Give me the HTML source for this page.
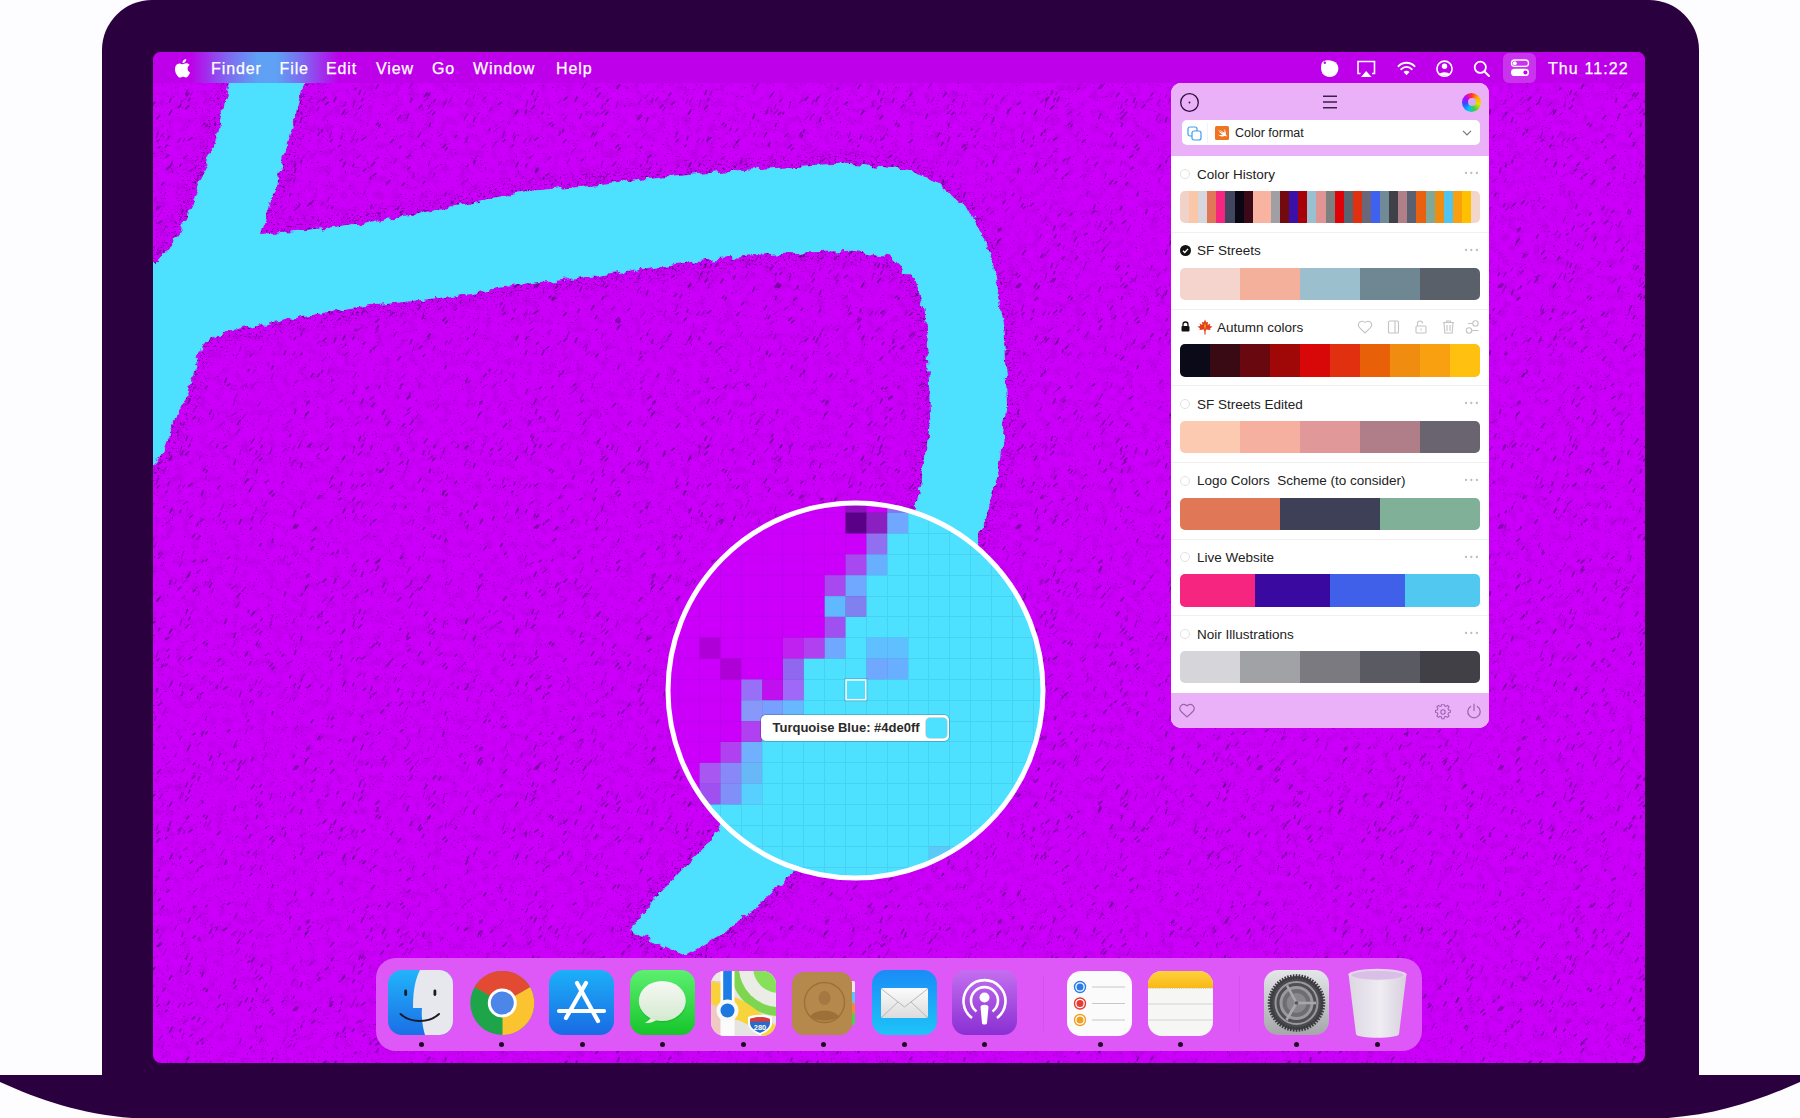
<!DOCTYPE html>
<html><head><meta charset="utf-8">
<style>
*{box-sizing:border-box;margin:0;padding:0}
html,body{width:1800px;height:1118px;overflow:hidden;background:#fdfcfe;font-family:"Liberation Sans",sans-serif}
.abs{position:absolute}
#frame{position:absolute;left:102px;top:0;width:1597px;height:1090px;background:#2a003f;border-radius:50px 50px 0 0}
#base{position:absolute;left:0;top:0}
#screen{position:absolute;left:153px;top:52px;width:1492px;height:1011px;background:#cc00fa;border-radius:8px;overflow:hidden}
#stroke{position:absolute;left:0;top:0}
#menubar{position:absolute;left:0;top:0;width:1492px;height:30.5px;background:#bd00e9}
.mbglow{position:absolute;left:38px;top:0;width:148px;height:30.5px;background:linear-gradient(90deg,rgba(85,175,245,0) 0%,rgba(85,175,245,0.6) 25%,rgba(85,178,245,0.9) 45%,rgba(85,178,245,0.9) 58%,rgba(85,175,245,0.6) 75%,rgba(85,175,245,0) 100%)}
.mi{position:absolute;top:7.8px;color:#fff;font-size:16px;line-height:18px;letter-spacing:0.9px;-webkit-text-stroke:0.25px #fff}
#panel{position:absolute;left:1171px;top:83px;width:318px;height:645px;background:#fff;border-radius:10px;overflow:hidden}
.phead{position:absolute;left:0;top:0;width:318px;height:72.6px;background:#ebb1f8}
.pfoot{position:absolute;left:0;top:610px;width:318px;height:35px;background:#ebb1f8}
.dd{position:absolute;left:11px;top:36.7px;width:298px;height:25.8px;background:#fff;border-radius:5px}
.lbl{position:absolute;font-size:13.5px;line-height:18px;color:#222;white-space:nowrap}
.sw{position:absolute;left:9px;width:300px;height:32.3px;border-radius:5px;overflow:hidden;display:flex}
.sep{position:absolute;left:0;width:318px;height:1px;background:#f0f0f0}
.tip{position:absolute;left:761px;top:715px;width:188px;height:26px;background:#fff;border-radius:5px;box-shadow:0 0 0 0.8px rgba(0,0,0,0.22)}
.tip span{position:absolute;left:11.5px;top:5px;font-size:13px;line-height:16px;font-weight:bold;color:#2a2a2a;white-space:nowrap}
.tsw{position:absolute;left:165px;top:3px;width:20.5px;height:20px;border-radius:4px;background:#4de0ff;box-shadow:0 0 0 0.7px rgba(0,0,0,0.2)}
#dock{position:absolute;left:376px;top:958px;width:1046px;height:93px;border-radius:20px;background:#dd58f6}
.dsep{position:absolute;top:975px;width:1px;height:56px;background:rgba(150,40,170,0.13)}
.ddot{position:absolute;top:1042px;width:5px;height:5px;border-radius:50%;background:#1e0a28}
</style></head><body>
<svg id="base" width="1800" height="1118" viewBox="0 0 1800 1118">
<path d="M0 1075 L1800 1075 L1800 1082 C1760 1100 1720 1114 1668 1118 L132 1118 C80 1114 40 1100 0 1082 Z" fill="#2a003f"/>
</svg>
<div id="frame"></div>
<div id="screen">
<svg id="stroke" width="1492" height="1011" viewBox="153 52 1492 1011">
<defs>
<filter id="spk" x="0" y="0" width="100%" height="100%" color-interpolation-filters="sRGB"><feTurbulence type="fractalNoise" baseFrequency="0.45 0.55" numOctaves="3" seed="7" result="n"/><feColorMatrix in="n" type="matrix" values="0 0 0 0 0.2  0 0 0 0 0  0 0 0 0 0.3  0 0 0 -14 4.2" result="s"/><feComponentTransfer in="s"><feFuncA type="linear" slope="0.6"/></feComponentTransfer></filter><filter id="mot" x="0" y="0" width="100%" height="100%" color-interpolation-filters="sRGB"><feTurbulence type="fractalNoise" baseFrequency="0.12" numOctaves="2" seed="13" result="n"/><feColorMatrix in="n" type="matrix" values="0 0 0 0 0.45  0 0 0 0 0  0 0 0 0 0.6  0 0 0 -2.2 1.2"/></filter>
<filter id="rough" x="-5%" y="-5%" width="110%" height="110%"><feTurbulence type="fractalNoise" baseFrequency="0.1" numOctaves="4" seed="3" result="t"/><feDisplacementMap in="SourceGraphic" in2="t" scale="9" xChannelSelector="R" yChannelSelector="G"/></filter>
<filter id="edgetex" x="-5%" y="-5%" width="110%" height="110%" color-interpolation-filters="sRGB"><feTurbulence type="fractalNoise" baseFrequency="0.35 0.5" numOctaves="3" seed="19" result="n"/><feColorMatrix in="n" type="matrix" values="0 0 0 0 0  0 0 0 0 0  0 0 0 0 0  0 0 0 -14 5.3" result="m"/><feGaussianBlur in="SourceGraphic" stdDeviation="6" result="b"/><feComposite in="b" in2="m" operator="in"/></filter><pattern id="st1" width="173" height="173" patternUnits="userSpaceOnUse" patternTransform="translate(0 0)"><path d="M78.3 96.8l2.8 -3.8M87.9 101.6l1.4 -2.1M109.0 137.2l1.6 -1.7M15.7 140.1l3.3 -2.4M169.9 166.9l2.0 -3.4M27.2 2.6l2.8 -2.2M32.9 41.9l1.2 -1.7M76.2 145.7l1.7 -3.1M86.5 114.6l2.3 -2.4M172.6 172.3l2.0 -4.0M54.5 39.7l2.3 -1.8M132.6 69.3l2.9 -3.5M165.7 146.6l1.5 -1.4M157.5 81.3l3.1 -3.8M12.6 108.9l3.0 -3.1M15.1 57.5l2.0 -4.4M20.4 42.6l1.8 -1.4M137.9 30.7l2.2 -2.9M33.0 126.6l1.2 -2.1M20.2 72.8l1.8 -1.9M168.0 139.0l1.0 -2.7M36.5 68.2l2.2 -4.0M17.4 171.1l1.9 -1.9M133.7 56.9l2.3 -1.8M15.6 100.8l1.4 -2.3M64.3 78.4l2.8 -4.0M99.4 149.9l1.9 -1.7M157.2 141.5l2.0 -1.9M127.9 162.7l0.8 -2.5M152.6 104.4l2.5 -2.1M6.7 166.5l1.2 -2.4M44.5 142.5l2.6 -2.8M30.3 124.6l1.6 -1.5M96.8 147.5l2.7 -2.8M158.7 35.3l1.4 -1.5M77.1 10.5l1.6 -1.9M99.0 22.8l1.0 -2.9M169.6 113.6l2.1 -3.5M24.3 6.1l0.7 -1.9M121.3 166.6l1.0 -1.8M83.4 126.4l0.8 -2.9M13.0 94.5l1.4 -4.0M127.5 121.7l1.4 -4.2M60.9 118.5l1.6 -4.4M72.2 136.8l2.4 -3.9" stroke="#40006a" stroke-opacity="0.55" stroke-width="1.6" stroke-linecap="round" fill="none"/><path d="M82.1 113.7l4.3 -3.7M1.9 64.8l1.6 -3.8M119.5 104.1l2.5 -4.6M25.1 76.1l1.2 -3.5M10.2 141.7l1.5 -2.9M58.3 70.0l5.2 -3.7M10.5 158.3l3.9 -3.1M170.8 163.8l2.1 -2.7M23.4 54.1l4.1 -3.6M120.6 8.9l1.4 -3.4M69.3 72.5l3.2 -4.4M66.5 5.3l1.7 -5.7M168.9 114.8l2.9 -3.4M119.4 116.6l2.5 -2.4M62.9 88.5l3.6 -5.1M4.9 142.3l2.7 -3.9M38.4 73.9l1.9 -4.2M17.8 95.1l1.7 -3.3M6.4 47.8l2.2 -3.8M9.0 79.5l2.7 -2.8M82.4 165.9l1.4 -4.7M29.0 159.9l3.3 -3.0M129.5 157.8l2.1 -2.2M133.3 59.1l3.2 -2.3M6.9 107.1l1.8 -6.7M87.1 4.1l1.7 -3.9M143.9 110.6l2.2 -3.3M82.6 108.5l1.2 -3.9M154.7 28.1l1.4 -3.9M48.1 163.3l2.3 -4.5M121.9 37.0l2.9 -2.9M118.2 120.1l1.2 -3.3M72.7 41.7l1.3 -4.6M96.9 108.1l1.9 -6.4M131.6 72.3l1.7 -5.1M136.5 100.4l2.8 -3.3M127.3 97.5l1.4 -2.7M156.4 138.0l2.1 -6.2M92.5 136.5l3.5 -2.8M61.1 54.0l3.1 -6.0" stroke="#40006a" stroke-opacity="0.4" stroke-width="1.2" stroke-linecap="round" fill="none"/></pattern><pattern id="st2" width="241" height="241" patternUnits="userSpaceOnUse" patternTransform="translate(37 91)"><path d="M39.8 166.2l2.0 -2.8M52.1 191.0l2.2 -3.2M121.7 56.9l1.0 -1.2M141.1 16.7l2.8 -2.7M56.1 10.2l1.9 -4.1M210.9 148.4l1.1 -1.2M119.9 27.9l2.8 -3.3M37.3 197.0l0.6 -1.8M109.2 133.0l1.5 -2.1M45.0 9.0l2.9 -2.9M188.0 50.3l1.5 -4.2M181.9 183.8l1.4 -2.9M29.5 114.8l2.9 -2.7M222.5 213.9l1.8 -2.1M108.8 93.0l2.9 -3.5M6.5 22.5l1.0 -3.5M119.5 118.5l1.3 -2.9M53.5 146.7l1.6 -2.7M43.5 41.0l0.8 -2.4M83.5 143.9l1.9 -1.5M15.8 196.1l2.5 -2.9M164.7 162.9l1.2 -4.0M98.1 238.4l2.3 -3.7M212.8 118.3l1.9 -1.9M211.2 39.1l0.7 -1.6M186.5 116.4l3.2 -2.4M62.2 69.9l2.1 -1.8M16.7 81.5l1.1 -4.0M179.7 115.4l0.6 -2.2M126.7 175.6l1.1 -1.1M202.0 191.6l2.1 -3.6M102.7 140.1l2.7 -3.0M128.8 66.5l3.1 -2.2M165.2 229.9l0.8 -1.3M155.2 205.3l2.3 -2.3M97.8 231.0l3.2 -2.7M22.9 22.6l1.0 -1.3M33.9 209.0l2.7 -2.2M129.8 78.2l2.2 -2.1M40.0 44.3l1.2 -2.4M132.6 11.1l1.2 -3.4M186.6 190.6l0.9 -1.2M15.3 184.1l0.9 -1.8M61.0 167.9l2.0 -1.5M93.7 74.6l2.9 -3.1M121.3 132.4l3.4 -2.7M144.9 122.5l1.0 -3.6M74.7 168.6l1.7 -2.6M15.4 196.3l2.9 -3.4M76.7 239.4l1.4 -1.1M17.7 196.3l2.3 -3.0M149.8 4.8l2.1 -2.7M124.7 93.8l1.9 -1.9M11.8 104.6l1.0 -2.0M197.0 174.4l2.0 -2.0M92.9 117.3l1.0 -3.3M20.6 115.6l1.3 -2.7M214.6 187.9l1.4 -3.1M161.0 207.0l1.7 -3.2M59.1 220.9l1.3 -2.3" stroke="#40006a" stroke-opacity="0.5" stroke-width="1.8" stroke-linecap="round" fill="none"/><path d="M230.9 33.8l0.8 -3.0M44.4 29.1l3.7 -4.2M214.4 55.8l4.6 -5.1M144.9 224.6l1.8 -5.5M170.7 11.7l3.4 -5.6M74.9 45.8l3.4 -5.4M226.1 186.5l3.7 -5.8M168.3 147.6l1.2 -3.9M75.3 188.2l3.3 -6.0M34.3 198.9l4.2 -3.8M11.8 128.2l1.0 -3.0M122.0 124.7l2.2 -4.1M220.9 74.1l2.4 -3.8M71.7 143.5l3.2 -4.1M162.3 127.3l0.9 -3.2M85.7 104.1l1.4 -4.4M229.5 123.4l3.6 -2.9M215.8 41.3l3.4 -3.9M79.1 86.1l3.0 -2.2M129.0 191.8l4.1 -3.8M167.2 12.6l1.7 -4.3M222.0 111.0l3.7 -5.2M126.3 140.9l3.0 -6.3M114.0 175.3l3.6 -4.2M189.0 197.6l1.6 -5.2M4.4 120.5l3.7 -4.2M41.3 166.8l3.3 -3.4M10.1 233.1l3.4 -2.8M52.1 61.4l4.8 -4.3M66.6 23.5l3.6 -3.3M82.9 177.1l2.5 -6.2M9.2 91.0l5.2 -3.8M49.0 118.1l1.9 -4.1M173.1 111.9l2.9 -2.8M64.2 15.7l4.3 -3.7M214.3 155.7l1.9 -2.6M145.5 10.2l4.0 -2.9M184.7 1.0l1.5 -5.3M204.0 56.2l3.9 -3.3M82.5 208.2l5.1 -3.6M91.6 154.3l1.4 -3.4M215.2 132.9l1.6 -4.2M123.6 45.4l3.1 -2.7M202.1 122.9l2.2 -5.4M234.7 45.9l1.6 -4.3M183.6 93.2l4.1 -3.8M39.0 12.2l3.2 -3.2M124.8 233.7l2.0 -3.0M208.4 144.2l2.1 -4.7M5.3 228.6l2.2 -5.3M198.9 23.8l2.4 -2.2M121.7 226.1l4.1 -5.2M150.0 178.3l1.2 -4.2M227.0 175.2l2.6 -6.1M157.2 77.4l2.9 -2.9M13.8 223.1l3.4 -2.5M76.2 24.9l3.2 -3.6M42.3 114.9l3.0 -3.5M196.0 73.9l1.8 -4.9M231.1 90.3l0.9 -3.0" stroke="#40006a" stroke-opacity="0.35" stroke-width="1.1" stroke-linecap="round" fill="none"/></pattern><filter id="soft" x="0" y="0" width="100%" height="100%"><feGaussianBlur stdDeviation="0.55"/></filter></defs>
<rect x="153" y="52" width="1492" height="1011" fill="#000" filter="url(#mot)" opacity="0.22"/><rect x="153" y="52" width="1492" height="1011" fill="#000" filter="url(#spk)" opacity="0.5"/><g filter="url(#soft)"><rect x="153" y="52" width="1492" height="1011" fill="url(#st1)"/><rect x="153" y="52" width="1492" height="1011" fill="url(#st2)"/></g>
<path fill="none" stroke="#2a0040" stroke-width="22" stroke-opacity="0.55" filter="url(#edgetex)" d="M235 52 L311 52 L303 83 L293 125 L278 178 L261 234 L326 228 L375 221 L440 209.5 L515 192.6 L628 181 L740 170 L853 164 L910 170 L940 185 L973 215 L992 260 L1003.5 328 L1007 403 L1000 459 L992 497 L981 531 L955 600 L870 780 L791.8 873 L764.6 900.2 L728.8 928.8 L684.5 956 L630 930.2 L657.3 895.9 L685.9 865.8 L711.6 841.5 L718.8 830 L800 700 L900 560 L917 500.6 L924.6 459.3 L930.2 421.7 L928.4 365.4 L924.6 309 L913.3 279 L890.8 256.5 L853.2 250.8 L796.9 252.7 L703 260.2 L609 273.4 L515 286.5 L440 297.8 L375.3 305.3 L300.2 316.6 L225 331.6 L202.6 342.9 L187.5 391.7 L172.5 425.5 L155.6 466.8 L140 480 L140 250 L155.6 262 L172.5 245.2 L187.5 215.2 L206.3 162.6 L217.6 136.3 L228.9 83 Z"/>
<path filter="url(#rough)" fill="#4de0ff" d="M235 52 L311 52 L303 83 L293 125 L278 178 L261 234 L326 228 L375 221 L440 209.5 L515 192.6 L628 181 L740 170 L853 164 L910 170 L940 185 L973 215 L992 260 L1003.5 328 L1007 403 L1000 459 L992 497 L981 531 L955 600 L870 780 L791.8 873 L764.6 900.2 L728.8 928.8 L684.5 956 L630 930.2 L657.3 895.9 L685.9 865.8 L711.6 841.5 L718.8 830 L800 700 L900 560 L917 500.6 L924.6 459.3 L930.2 421.7 L928.4 365.4 L924.6 309 L913.3 279 L890.8 256.5 L853.2 250.8 L796.9 252.7 L703 260.2 L609 273.4 L515 286.5 L440 297.8 L375.3 305.3 L300.2 316.6 L225 331.6 L202.6 342.9 L187.5 391.7 L172.5 425.5 L155.6 466.8 L140 480 L140 250 L155.6 262 L172.5 245.2 L187.5 215.2 L206.3 162.6 L217.6 136.3 L228.9 83 Z"/>
</svg>
<div id="menubar">
<div class="mbglow"></div>
<svg class="abs" style="left:21px;top:6px" width="17" height="20" viewBox="0 0 17 20"><path fill="#fff" d="M13.6 10.6c0-2.3 1.9-3.4 2-3.5-1.1-1.6-2.8-1.8-3.4-1.8-1.4-.1-2.8.9-3.5.9-.7 0-1.8-.8-3-.8C4.1 5.4 2.6 6.3 1.8 7.7c-1.7 2.9-.4 7.2 1.2 9.5.8 1.1 1.7 2.4 2.9 2.4 1.2 0 1.6-.8 3-.8s1.8.8 3 .7c1.3 0 2.1-1.2 2.8-2.3.9-1.3 1.3-2.6 1.3-2.7 0 0-2.4-.9-2.4-3.9zM11.3 3.8c.6-.8 1.1-1.8.9-2.9-.9 0-2 .6-2.7 1.4-.6.7-1.1 1.8-1 2.8 1.1.1 2.1-.5 2.8-1.3z"/></svg>
<div class="mi" style="left:58px">Finder</div>
<div class="mi" style="left:126.5px">File</div>
<div class="mi" style="left:173px">Edit</div>
<div class="mi" style="left:223px">View</div>
<div class="mi" style="left:279px">Go</div>
<div class="mi" style="left:320px">Window</div>
<div class="mi" style="left:403px">Help</div>
<div class="mi" style="left:1395px;letter-spacing:1.1px">Thu 11:22</div>
<div class="abs" style="left:1350px;top:1px;width:33px;height:30px;border-radius:6px;background:rgba(255,255,255,0.2)"></div>
<svg class="abs" style="left:1160px;top:0" width="230" height="31" viewBox="1313 52 230 31">
 <path fill="#fff" d="M1323 61.5 C1327 59.5 1334 60 1337 64 C1339.5 67.5 1338.5 73.5 1334 76 C1330 78 1325 77 1322.5 73.5 C1320.5 70 1320.5 63.5 1323 61.5Z"/>
 <circle cx="1324.8" cy="62.8" r="1.2" fill="#c000ee"/>
 <path fill="none" stroke="#fff" stroke-width="1.6" d="M1360.5 73.5 H1358 V61.5 H1374.5 V73.5 H1372"/>
 <path fill="#fff" d="M1366.2 71 L1371.5 77 H1361 Z"/>
 <path fill="none" stroke="#fff" stroke-width="1.9" stroke-linecap="round" d="M1398.5 66.2 A11 11 0 0 1 1414.5 66.2 M1401.3 69.2 A7 7 0 0 1 1411.7 69.2"/>
 <path fill="#fff" d="M1403.5 72 A4 4 0 0 1 1409.5 72 L1406.5 75.2 Z"/>
 <circle cx="1444.5" cy="68.7" r="7.6" fill="none" stroke="#fff" stroke-width="1.6"/>
 <circle cx="1444.5" cy="66.3" r="2.7" fill="#fff"/>
 <path fill="#fff" d="M1439.2 74.3 C1440.5 71.6 1448.5 71.6 1449.8 74.3 C1448 76 1441 76 1439.2 74.3Z"/>
 <circle cx="1480.3" cy="67.3" r="5.6" fill="none" stroke="#fff" stroke-width="1.8"/>
 <path stroke="#fff" stroke-width="2" stroke-linecap="round" d="M1484.5 71.5 L1489 76"/>
 <rect x="1511.5" y="60" width="17" height="6.3" rx="3.15" fill="none" stroke="#fff" stroke-width="1.3"/>
 <circle cx="1514.8" cy="63.15" r="2" fill="#fff"/>
 <rect x="1511" y="68.8" width="18" height="7.2" rx="3.6" fill="#fff"/>
 <circle cx="1525.4" cy="72.4" r="2" fill="#c000ee"/>
</svg>
</div>
</div>
<svg id="mag" class="abs" style="left:0;top:0" width="1800" height="1118" viewBox="0 0 1800 1118">
<defs><clipPath id="mc"><circle cx="855.5" cy="690.5" r="186"/></clipPath></defs>
<g clip-path="url(#mc)">
<rect x="640" y="480" width="430" height="420" fill="#4de0ff"/>
<rect x="637.00" y="470.90" width="21.5" height="21.5" fill="#cc00fa"/><rect x="657.85" y="470.90" width="21.5" height="21.5" fill="#cc00fa"/><rect x="678.70" y="470.90" width="21.5" height="21.5" fill="#cc00fa"/><rect x="699.55" y="470.90" width="21.5" height="21.5" fill="#cc00fa"/><rect x="720.40" y="470.90" width="21.5" height="21.5" fill="#cc00fa"/><rect x="741.25" y="470.90" width="21.5" height="21.5" fill="#cc00fa"/><rect x="762.10" y="470.90" width="21.5" height="21.5" fill="#cc00fa"/><rect x="782.95" y="470.90" width="21.5" height="21.5" fill="#cc00fa"/><rect x="803.80" y="470.90" width="21.5" height="21.5" fill="#cc00fa"/><rect x="824.65" y="470.90" width="21.5" height="21.5" fill="#cc00fa"/><rect x="845.50" y="470.90" width="21.5" height="21.5" fill="#cc00fa"/><rect x="866.35" y="470.90" width="21.5" height="21.5" fill="#cc00fa"/><rect x="887.20" y="470.90" width="21.5" height="21.5" fill="#cc00fa"/><rect x="908.05" y="470.90" width="21.5" height="21.5" fill="#4de0ff"/><rect x="928.90" y="470.90" width="21.5" height="21.5" fill="#4de0ff"/><rect x="949.75" y="470.90" width="21.5" height="21.5" fill="#4de0ff"/><rect x="970.60" y="470.90" width="21.5" height="21.5" fill="#4de0ff"/><rect x="991.45" y="470.90" width="21.5" height="21.5" fill="#4de0ff"/><rect x="1012.30" y="470.90" width="21.5" height="21.5" fill="#4de0ff"/><rect x="1033.15" y="470.90" width="21.5" height="21.5" fill="#4de0ff"/><rect x="1054.00" y="470.90" width="21.5" height="21.5" fill="#4de0ff"/><rect x="637.00" y="491.75" width="21.5" height="21.5" fill="#cc00fa"/><rect x="657.85" y="491.75" width="21.5" height="21.5" fill="#cc00fa"/><rect x="678.70" y="491.75" width="21.5" height="21.5" fill="#cc00fa"/><rect x="699.55" y="491.75" width="21.5" height="21.5" fill="#cc00fa"/><rect x="720.40" y="491.75" width="21.5" height="21.5" fill="#cc00fa"/><rect x="741.25" y="491.75" width="21.5" height="21.5" fill="#cc00fa"/><rect x="762.10" y="491.75" width="21.5" height="21.5" fill="#cc00fa"/><rect x="782.95" y="491.75" width="21.5" height="21.5" fill="#cc00fa"/><rect x="803.80" y="491.75" width="21.5" height="21.5" fill="#cc00fa"/><rect x="824.65" y="491.75" width="21.5" height="21.5" fill="#cc00fa"/><rect x="845.50" y="491.75" width="21.5" height="21.5" fill="#9010c0"/><rect x="866.35" y="491.75" width="21.5" height="21.5" fill="#cc00fa"/><rect x="887.20" y="491.75" width="21.5" height="21.5" fill="#9070f0"/><rect x="908.05" y="491.75" width="21.5" height="21.5" fill="#4de0ff"/><rect x="928.90" y="491.75" width="21.5" height="21.5" fill="#4de0ff"/><rect x="949.75" y="491.75" width="21.5" height="21.5" fill="#4de0ff"/><rect x="970.60" y="491.75" width="21.5" height="21.5" fill="#4de0ff"/><rect x="991.45" y="491.75" width="21.5" height="21.5" fill="#4de0ff"/><rect x="1012.30" y="491.75" width="21.5" height="21.5" fill="#4de0ff"/><rect x="1033.15" y="491.75" width="21.5" height="21.5" fill="#4de0ff"/><rect x="1054.00" y="491.75" width="21.5" height="21.5" fill="#4de0ff"/><rect x="637.00" y="512.60" width="21.5" height="21.5" fill="#cc00fa"/><rect x="657.85" y="512.60" width="21.5" height="21.5" fill="#cc00fa"/><rect x="678.70" y="512.60" width="21.5" height="21.5" fill="#cc00fa"/><rect x="699.55" y="512.60" width="21.5" height="21.5" fill="#cc00fa"/><rect x="720.40" y="512.60" width="21.5" height="21.5" fill="#cc00fa"/><rect x="741.25" y="512.60" width="21.5" height="21.5" fill="#cc00fa"/><rect x="762.10" y="512.60" width="21.5" height="21.5" fill="#cc00fa"/><rect x="782.95" y="512.60" width="21.5" height="21.5" fill="#cc00fa"/><rect x="803.80" y="512.60" width="21.5" height="21.5" fill="#cc00fa"/><rect x="824.65" y="512.60" width="21.5" height="21.5" fill="#cc00fa"/><rect x="845.50" y="512.60" width="21.5" height="21.5" fill="#5a0088"/><rect x="866.35" y="512.60" width="21.5" height="21.5" fill="#8a20c0"/><rect x="887.20" y="512.60" width="21.5" height="21.5" fill="#70a8ff"/><rect x="908.05" y="512.60" width="21.5" height="21.5" fill="#4de0ff"/><rect x="928.90" y="512.60" width="21.5" height="21.5" fill="#4de0ff"/><rect x="949.75" y="512.60" width="21.5" height="21.5" fill="#4de0ff"/><rect x="970.60" y="512.60" width="21.5" height="21.5" fill="#4de0ff"/><rect x="991.45" y="512.60" width="21.5" height="21.5" fill="#4de0ff"/><rect x="1012.30" y="512.60" width="21.5" height="21.5" fill="#4de0ff"/><rect x="1033.15" y="512.60" width="21.5" height="21.5" fill="#4de0ff"/><rect x="1054.00" y="512.60" width="21.5" height="21.5" fill="#4de0ff"/><rect x="637.00" y="533.45" width="21.5" height="21.5" fill="#cc00fa"/><rect x="657.85" y="533.45" width="21.5" height="21.5" fill="#cc00fa"/><rect x="678.70" y="533.45" width="21.5" height="21.5" fill="#cc00fa"/><rect x="699.55" y="533.45" width="21.5" height="21.5" fill="#cc00fa"/><rect x="720.40" y="533.45" width="21.5" height="21.5" fill="#cc00fa"/><rect x="741.25" y="533.45" width="21.5" height="21.5" fill="#cc00fa"/><rect x="762.10" y="533.45" width="21.5" height="21.5" fill="#cc00fa"/><rect x="782.95" y="533.45" width="21.5" height="21.5" fill="#cc00fa"/><rect x="803.80" y="533.45" width="21.5" height="21.5" fill="#cc00fa"/><rect x="824.65" y="533.45" width="21.5" height="21.5" fill="#cc00fa"/><rect x="845.50" y="533.45" width="21.5" height="21.5" fill="#cc00fa"/><rect x="866.35" y="533.45" width="21.5" height="21.5" fill="#9070f0"/><rect x="887.20" y="533.45" width="21.5" height="21.5" fill="#4de0ff"/><rect x="908.05" y="533.45" width="21.5" height="21.5" fill="#4de0ff"/><rect x="928.90" y="533.45" width="21.5" height="21.5" fill="#4de0ff"/><rect x="949.75" y="533.45" width="21.5" height="21.5" fill="#4de0ff"/><rect x="970.60" y="533.45" width="21.5" height="21.5" fill="#4de0ff"/><rect x="991.45" y="533.45" width="21.5" height="21.5" fill="#4de0ff"/><rect x="1012.30" y="533.45" width="21.5" height="21.5" fill="#4de0ff"/><rect x="1033.15" y="533.45" width="21.5" height="21.5" fill="#4de0ff"/><rect x="1054.00" y="533.45" width="21.5" height="21.5" fill="#4de0ff"/><rect x="637.00" y="554.30" width="21.5" height="21.5" fill="#cc00fa"/><rect x="657.85" y="554.30" width="21.5" height="21.5" fill="#cc00fa"/><rect x="678.70" y="554.30" width="21.5" height="21.5" fill="#cc00fa"/><rect x="699.55" y="554.30" width="21.5" height="21.5" fill="#cc00fa"/><rect x="720.40" y="554.30" width="21.5" height="21.5" fill="#cc00fa"/><rect x="741.25" y="554.30" width="21.5" height="21.5" fill="#cc00fa"/><rect x="762.10" y="554.30" width="21.5" height="21.5" fill="#cc00fa"/><rect x="782.95" y="554.30" width="21.5" height="21.5" fill="#cc00fa"/><rect x="803.80" y="554.30" width="21.5" height="21.5" fill="#cc00fa"/><rect x="824.65" y="554.30" width="21.5" height="21.5" fill="#cc00fa"/><rect x="845.50" y="554.30" width="21.5" height="21.5" fill="#a848f0"/><rect x="866.35" y="554.30" width="21.5" height="21.5" fill="#68b0ff"/><rect x="887.20" y="554.30" width="21.5" height="21.5" fill="#4de0ff"/><rect x="908.05" y="554.30" width="21.5" height="21.5" fill="#4de0ff"/><rect x="928.90" y="554.30" width="21.5" height="21.5" fill="#4de0ff"/><rect x="949.75" y="554.30" width="21.5" height="21.5" fill="#4de0ff"/><rect x="970.60" y="554.30" width="21.5" height="21.5" fill="#4de0ff"/><rect x="991.45" y="554.30" width="21.5" height="21.5" fill="#4de0ff"/><rect x="1012.30" y="554.30" width="21.5" height="21.5" fill="#4de0ff"/><rect x="1033.15" y="554.30" width="21.5" height="21.5" fill="#4de0ff"/><rect x="1054.00" y="554.30" width="21.5" height="21.5" fill="#4de0ff"/><rect x="637.00" y="575.15" width="21.5" height="21.5" fill="#cc00fa"/><rect x="657.85" y="575.15" width="21.5" height="21.5" fill="#cc00fa"/><rect x="678.70" y="575.15" width="21.5" height="21.5" fill="#cc00fa"/><rect x="699.55" y="575.15" width="21.5" height="21.5" fill="#cc00fa"/><rect x="720.40" y="575.15" width="21.5" height="21.5" fill="#cc00fa"/><rect x="741.25" y="575.15" width="21.5" height="21.5" fill="#cc00fa"/><rect x="762.10" y="575.15" width="21.5" height="21.5" fill="#cc00fa"/><rect x="782.95" y="575.15" width="21.5" height="21.5" fill="#cc00fa"/><rect x="803.80" y="575.15" width="21.5" height="21.5" fill="#cc00fa"/><rect x="824.65" y="575.15" width="21.5" height="21.5" fill="#a848f0"/><rect x="845.50" y="575.15" width="21.5" height="21.5" fill="#70a8ff"/><rect x="866.35" y="575.15" width="21.5" height="21.5" fill="#4de0ff"/><rect x="887.20" y="575.15" width="21.5" height="21.5" fill="#4de0ff"/><rect x="908.05" y="575.15" width="21.5" height="21.5" fill="#4de0ff"/><rect x="928.90" y="575.15" width="21.5" height="21.5" fill="#4de0ff"/><rect x="949.75" y="575.15" width="21.5" height="21.5" fill="#4de0ff"/><rect x="970.60" y="575.15" width="21.5" height="21.5" fill="#4de0ff"/><rect x="991.45" y="575.15" width="21.5" height="21.5" fill="#4de0ff"/><rect x="1012.30" y="575.15" width="21.5" height="21.5" fill="#4de0ff"/><rect x="1033.15" y="575.15" width="21.5" height="21.5" fill="#4de0ff"/><rect x="1054.00" y="575.15" width="21.5" height="21.5" fill="#4de0ff"/><rect x="637.00" y="596.00" width="21.5" height="21.5" fill="#cc00fa"/><rect x="657.85" y="596.00" width="21.5" height="21.5" fill="#cc00fa"/><rect x="678.70" y="596.00" width="21.5" height="21.5" fill="#cc00fa"/><rect x="699.55" y="596.00" width="21.5" height="21.5" fill="#cc00fa"/><rect x="720.40" y="596.00" width="21.5" height="21.5" fill="#cc00fa"/><rect x="741.25" y="596.00" width="21.5" height="21.5" fill="#cc00fa"/><rect x="762.10" y="596.00" width="21.5" height="21.5" fill="#cc00fa"/><rect x="782.95" y="596.00" width="21.5" height="21.5" fill="#cc00fa"/><rect x="803.80" y="596.00" width="21.5" height="21.5" fill="#cc00fa"/><rect x="824.65" y="596.00" width="21.5" height="21.5" fill="#60b8ff"/><rect x="845.50" y="596.00" width="21.5" height="21.5" fill="#8080f0"/><rect x="866.35" y="596.00" width="21.5" height="21.5" fill="#4de0ff"/><rect x="887.20" y="596.00" width="21.5" height="21.5" fill="#4de0ff"/><rect x="908.05" y="596.00" width="21.5" height="21.5" fill="#4de0ff"/><rect x="928.90" y="596.00" width="21.5" height="21.5" fill="#4de0ff"/><rect x="949.75" y="596.00" width="21.5" height="21.5" fill="#4de0ff"/><rect x="970.60" y="596.00" width="21.5" height="21.5" fill="#4de0ff"/><rect x="991.45" y="596.00" width="21.5" height="21.5" fill="#4de0ff"/><rect x="1012.30" y="596.00" width="21.5" height="21.5" fill="#4de0ff"/><rect x="1033.15" y="596.00" width="21.5" height="21.5" fill="#4de0ff"/><rect x="1054.00" y="596.00" width="21.5" height="21.5" fill="#4de0ff"/><rect x="637.00" y="616.85" width="21.5" height="21.5" fill="#cc00fa"/><rect x="657.85" y="616.85" width="21.5" height="21.5" fill="#cc00fa"/><rect x="678.70" y="616.85" width="21.5" height="21.5" fill="#cc00fa"/><rect x="699.55" y="616.85" width="21.5" height="21.5" fill="#cc00fa"/><rect x="720.40" y="616.85" width="21.5" height="21.5" fill="#cc00fa"/><rect x="741.25" y="616.85" width="21.5" height="21.5" fill="#cc00fa"/><rect x="762.10" y="616.85" width="21.5" height="21.5" fill="#cc00fa"/><rect x="782.95" y="616.85" width="21.5" height="21.5" fill="#cc00fa"/><rect x="803.80" y="616.85" width="21.5" height="21.5" fill="#cc00fa"/><rect x="824.65" y="616.85" width="21.5" height="21.5" fill="#a050f0"/><rect x="845.50" y="616.85" width="21.5" height="21.5" fill="#4de0ff"/><rect x="866.35" y="616.85" width="21.5" height="21.5" fill="#4de0ff"/><rect x="887.20" y="616.85" width="21.5" height="21.5" fill="#4de0ff"/><rect x="908.05" y="616.85" width="21.5" height="21.5" fill="#4de0ff"/><rect x="928.90" y="616.85" width="21.5" height="21.5" fill="#4de0ff"/><rect x="949.75" y="616.85" width="21.5" height="21.5" fill="#4de0ff"/><rect x="970.60" y="616.85" width="21.5" height="21.5" fill="#4de0ff"/><rect x="991.45" y="616.85" width="21.5" height="21.5" fill="#4de0ff"/><rect x="1012.30" y="616.85" width="21.5" height="21.5" fill="#4de0ff"/><rect x="1033.15" y="616.85" width="21.5" height="21.5" fill="#4de0ff"/><rect x="1054.00" y="616.85" width="21.5" height="21.5" fill="#4de0ff"/><rect x="637.00" y="637.70" width="21.5" height="21.5" fill="#cc00fa"/><rect x="657.85" y="637.70" width="21.5" height="21.5" fill="#cc00fa"/><rect x="678.70" y="637.70" width="21.5" height="21.5" fill="#cc00fa"/><rect x="699.55" y="637.70" width="21.5" height="21.5" fill="#b000d8"/><rect x="720.40" y="637.70" width="21.5" height="21.5" fill="#cc00fa"/><rect x="741.25" y="637.70" width="21.5" height="21.5" fill="#cc00fa"/><rect x="762.10" y="637.70" width="21.5" height="21.5" fill="#cc00fa"/><rect x="782.95" y="637.70" width="21.5" height="21.5" fill="#c020f0"/><rect x="803.80" y="637.70" width="21.5" height="21.5" fill="#b040f0"/><rect x="824.65" y="637.70" width="21.5" height="21.5" fill="#70a8ff"/><rect x="845.50" y="637.70" width="21.5" height="21.5" fill="#4de0ff"/><rect x="866.35" y="637.70" width="21.5" height="21.5" fill="#60c0ff"/><rect x="887.20" y="637.70" width="21.5" height="21.5" fill="#60c0ff"/><rect x="908.05" y="637.70" width="21.5" height="21.5" fill="#4de0ff"/><rect x="928.90" y="637.70" width="21.5" height="21.5" fill="#4de0ff"/><rect x="949.75" y="637.70" width="21.5" height="21.5" fill="#4de0ff"/><rect x="970.60" y="637.70" width="21.5" height="21.5" fill="#4de0ff"/><rect x="991.45" y="637.70" width="21.5" height="21.5" fill="#4de0ff"/><rect x="1012.30" y="637.70" width="21.5" height="21.5" fill="#4de0ff"/><rect x="1033.15" y="637.70" width="21.5" height="21.5" fill="#4de0ff"/><rect x="1054.00" y="637.70" width="21.5" height="21.5" fill="#4de0ff"/><rect x="637.00" y="658.55" width="21.5" height="21.5" fill="#cc00fa"/><rect x="657.85" y="658.55" width="21.5" height="21.5" fill="#cc00fa"/><rect x="678.70" y="658.55" width="21.5" height="21.5" fill="#cc00fa"/><rect x="699.55" y="658.55" width="21.5" height="21.5" fill="#cc00fa"/><rect x="720.40" y="658.55" width="21.5" height="21.5" fill="#b000d8"/><rect x="741.25" y="658.55" width="21.5" height="21.5" fill="#cc00fa"/><rect x="762.10" y="658.55" width="21.5" height="21.5" fill="#cc00fa"/><rect x="782.95" y="658.55" width="21.5" height="21.5" fill="#9068f0"/><rect x="803.80" y="658.55" width="21.5" height="21.5" fill="#4de0ff"/><rect x="824.65" y="658.55" width="21.5" height="21.5" fill="#4de0ff"/><rect x="845.50" y="658.55" width="21.5" height="21.5" fill="#4de0ff"/><rect x="866.35" y="658.55" width="21.5" height="21.5" fill="#70a8ff"/><rect x="887.20" y="658.55" width="21.5" height="21.5" fill="#68b0ff"/><rect x="908.05" y="658.55" width="21.5" height="21.5" fill="#4de0ff"/><rect x="928.90" y="658.55" width="21.5" height="21.5" fill="#4de0ff"/><rect x="949.75" y="658.55" width="21.5" height="21.5" fill="#4de0ff"/><rect x="970.60" y="658.55" width="21.5" height="21.5" fill="#4de0ff"/><rect x="991.45" y="658.55" width="21.5" height="21.5" fill="#4de0ff"/><rect x="1012.30" y="658.55" width="21.5" height="21.5" fill="#4de0ff"/><rect x="1033.15" y="658.55" width="21.5" height="21.5" fill="#4de0ff"/><rect x="1054.00" y="658.55" width="21.5" height="21.5" fill="#4de0ff"/><rect x="637.00" y="679.40" width="21.5" height="21.5" fill="#cc00fa"/><rect x="657.85" y="679.40" width="21.5" height="21.5" fill="#cc00fa"/><rect x="678.70" y="679.40" width="21.5" height="21.5" fill="#cc00fa"/><rect x="699.55" y="679.40" width="21.5" height="21.5" fill="#cc00fa"/><rect x="720.40" y="679.40" width="21.5" height="21.5" fill="#cc00fa"/><rect x="741.25" y="679.40" width="21.5" height="21.5" fill="#9870f8"/><rect x="762.10" y="679.40" width="21.5" height="21.5" fill="#c010f0"/><rect x="782.95" y="679.40" width="21.5" height="21.5" fill="#a068f8"/><rect x="803.80" y="679.40" width="21.5" height="21.5" fill="#4de0ff"/><rect x="824.65" y="679.40" width="21.5" height="21.5" fill="#4de0ff"/><rect x="845.50" y="679.40" width="21.5" height="21.5" fill="#4de0ff"/><rect x="866.35" y="679.40" width="21.5" height="21.5" fill="#4de0ff"/><rect x="887.20" y="679.40" width="21.5" height="21.5" fill="#4de0ff"/><rect x="908.05" y="679.40" width="21.5" height="21.5" fill="#4de0ff"/><rect x="928.90" y="679.40" width="21.5" height="21.5" fill="#4de0ff"/><rect x="949.75" y="679.40" width="21.5" height="21.5" fill="#4de0ff"/><rect x="970.60" y="679.40" width="21.5" height="21.5" fill="#4de0ff"/><rect x="991.45" y="679.40" width="21.5" height="21.5" fill="#4de0ff"/><rect x="1012.30" y="679.40" width="21.5" height="21.5" fill="#4de0ff"/><rect x="1033.15" y="679.40" width="21.5" height="21.5" fill="#4de0ff"/><rect x="1054.00" y="679.40" width="21.5" height="21.5" fill="#4de0ff"/><rect x="637.00" y="700.25" width="21.5" height="21.5" fill="#cc00fa"/><rect x="657.85" y="700.25" width="21.5" height="21.5" fill="#cc00fa"/><rect x="678.70" y="700.25" width="21.5" height="21.5" fill="#cc00fa"/><rect x="699.55" y="700.25" width="21.5" height="21.5" fill="#cc00fa"/><rect x="720.40" y="700.25" width="21.5" height="21.5" fill="#cc00fa"/><rect x="741.25" y="700.25" width="21.5" height="21.5" fill="#8898f8"/><rect x="762.10" y="700.25" width="21.5" height="21.5" fill="#78a0ff"/><rect x="782.95" y="700.25" width="21.5" height="21.5" fill="#68b8ff"/><rect x="803.80" y="700.25" width="21.5" height="21.5" fill="#4de0ff"/><rect x="824.65" y="700.25" width="21.5" height="21.5" fill="#4de0ff"/><rect x="845.50" y="700.25" width="21.5" height="21.5" fill="#4de0ff"/><rect x="866.35" y="700.25" width="21.5" height="21.5" fill="#4de0ff"/><rect x="887.20" y="700.25" width="21.5" height="21.5" fill="#4de0ff"/><rect x="908.05" y="700.25" width="21.5" height="21.5" fill="#4de0ff"/><rect x="928.90" y="700.25" width="21.5" height="21.5" fill="#4de0ff"/><rect x="949.75" y="700.25" width="21.5" height="21.5" fill="#4de0ff"/><rect x="970.60" y="700.25" width="21.5" height="21.5" fill="#4de0ff"/><rect x="991.45" y="700.25" width="21.5" height="21.5" fill="#4de0ff"/><rect x="1012.30" y="700.25" width="21.5" height="21.5" fill="#4de0ff"/><rect x="1033.15" y="700.25" width="21.5" height="21.5" fill="#4de0ff"/><rect x="1054.00" y="700.25" width="21.5" height="21.5" fill="#4de0ff"/><rect x="637.00" y="721.10" width="21.5" height="21.5" fill="#cc00fa"/><rect x="657.85" y="721.10" width="21.5" height="21.5" fill="#cc00fa"/><rect x="678.70" y="721.10" width="21.5" height="21.5" fill="#cc00fa"/><rect x="699.55" y="721.10" width="21.5" height="21.5" fill="#cc00fa"/><rect x="720.40" y="721.10" width="21.5" height="21.5" fill="#cc00fa"/><rect x="741.25" y="721.10" width="21.5" height="21.5" fill="#b040f0"/><rect x="762.10" y="721.10" width="21.5" height="21.5" fill="#4de0ff"/><rect x="782.95" y="721.10" width="21.5" height="21.5" fill="#4de0ff"/><rect x="803.80" y="721.10" width="21.5" height="21.5" fill="#4de0ff"/><rect x="824.65" y="721.10" width="21.5" height="21.5" fill="#4de0ff"/><rect x="845.50" y="721.10" width="21.5" height="21.5" fill="#4de0ff"/><rect x="866.35" y="721.10" width="21.5" height="21.5" fill="#4de0ff"/><rect x="887.20" y="721.10" width="21.5" height="21.5" fill="#4de0ff"/><rect x="908.05" y="721.10" width="21.5" height="21.5" fill="#4de0ff"/><rect x="928.90" y="721.10" width="21.5" height="21.5" fill="#4de0ff"/><rect x="949.75" y="721.10" width="21.5" height="21.5" fill="#4de0ff"/><rect x="970.60" y="721.10" width="21.5" height="21.5" fill="#4de0ff"/><rect x="991.45" y="721.10" width="21.5" height="21.5" fill="#4de0ff"/><rect x="1012.30" y="721.10" width="21.5" height="21.5" fill="#4de0ff"/><rect x="1033.15" y="721.10" width="21.5" height="21.5" fill="#4de0ff"/><rect x="1054.00" y="721.10" width="21.5" height="21.5" fill="#4de0ff"/><rect x="637.00" y="741.95" width="21.5" height="21.5" fill="#cc00fa"/><rect x="657.85" y="741.95" width="21.5" height="21.5" fill="#cc00fa"/><rect x="678.70" y="741.95" width="21.5" height="21.5" fill="#cc00fa"/><rect x="699.55" y="741.95" width="21.5" height="21.5" fill="#cc00fa"/><rect x="720.40" y="741.95" width="21.5" height="21.5" fill="#b040f0"/><rect x="741.25" y="741.95" width="21.5" height="21.5" fill="#70b0ff"/><rect x="762.10" y="741.95" width="21.5" height="21.5" fill="#4de0ff"/><rect x="782.95" y="741.95" width="21.5" height="21.5" fill="#4de0ff"/><rect x="803.80" y="741.95" width="21.5" height="21.5" fill="#4de0ff"/><rect x="824.65" y="741.95" width="21.5" height="21.5" fill="#4de0ff"/><rect x="845.50" y="741.95" width="21.5" height="21.5" fill="#4de0ff"/><rect x="866.35" y="741.95" width="21.5" height="21.5" fill="#4de0ff"/><rect x="887.20" y="741.95" width="21.5" height="21.5" fill="#4de0ff"/><rect x="908.05" y="741.95" width="21.5" height="21.5" fill="#4de0ff"/><rect x="928.90" y="741.95" width="21.5" height="21.5" fill="#4de0ff"/><rect x="949.75" y="741.95" width="21.5" height="21.5" fill="#4de0ff"/><rect x="970.60" y="741.95" width="21.5" height="21.5" fill="#4de0ff"/><rect x="991.45" y="741.95" width="21.5" height="21.5" fill="#4de0ff"/><rect x="1012.30" y="741.95" width="21.5" height="21.5" fill="#4de0ff"/><rect x="1033.15" y="741.95" width="21.5" height="21.5" fill="#4de0ff"/><rect x="1054.00" y="741.95" width="21.5" height="21.5" fill="#4de0ff"/><rect x="637.00" y="762.80" width="21.5" height="21.5" fill="#cc00fa"/><rect x="657.85" y="762.80" width="21.5" height="21.5" fill="#cc00fa"/><rect x="678.70" y="762.80" width="21.5" height="21.5" fill="#cc00fa"/><rect x="699.55" y="762.80" width="21.5" height="21.5" fill="#a858f0"/><rect x="720.40" y="762.80" width="21.5" height="21.5" fill="#8888f8"/><rect x="741.25" y="762.80" width="21.5" height="21.5" fill="#68b8f8"/><rect x="762.10" y="762.80" width="21.5" height="21.5" fill="#4de0ff"/><rect x="782.95" y="762.80" width="21.5" height="21.5" fill="#4de0ff"/><rect x="803.80" y="762.80" width="21.5" height="21.5" fill="#4de0ff"/><rect x="824.65" y="762.80" width="21.5" height="21.5" fill="#4de0ff"/><rect x="845.50" y="762.80" width="21.5" height="21.5" fill="#4de0ff"/><rect x="866.35" y="762.80" width="21.5" height="21.5" fill="#4de0ff"/><rect x="887.20" y="762.80" width="21.5" height="21.5" fill="#4de0ff"/><rect x="908.05" y="762.80" width="21.5" height="21.5" fill="#4de0ff"/><rect x="928.90" y="762.80" width="21.5" height="21.5" fill="#4de0ff"/><rect x="949.75" y="762.80" width="21.5" height="21.5" fill="#4de0ff"/><rect x="970.60" y="762.80" width="21.5" height="21.5" fill="#4de0ff"/><rect x="991.45" y="762.80" width="21.5" height="21.5" fill="#4de0ff"/><rect x="1012.30" y="762.80" width="21.5" height="21.5" fill="#4de0ff"/><rect x="1033.15" y="762.80" width="21.5" height="21.5" fill="#4de0ff"/><rect x="1054.00" y="762.80" width="21.5" height="21.5" fill="#4de0ff"/><rect x="637.00" y="783.65" width="21.5" height="21.5" fill="#cc00fa"/><rect x="657.85" y="783.65" width="21.5" height="21.5" fill="#cc00fa"/><rect x="678.70" y="783.65" width="21.5" height="21.5" fill="#cc00fa"/><rect x="699.55" y="783.65" width="21.5" height="21.5" fill="#a050f0"/><rect x="720.40" y="783.65" width="21.5" height="21.5" fill="#8090f8"/><rect x="741.25" y="783.65" width="21.5" height="21.5" fill="#58d0ff"/><rect x="762.10" y="783.65" width="21.5" height="21.5" fill="#4de0ff"/><rect x="782.95" y="783.65" width="21.5" height="21.5" fill="#4de0ff"/><rect x="803.80" y="783.65" width="21.5" height="21.5" fill="#4de0ff"/><rect x="824.65" y="783.65" width="21.5" height="21.5" fill="#4de0ff"/><rect x="845.50" y="783.65" width="21.5" height="21.5" fill="#4de0ff"/><rect x="866.35" y="783.65" width="21.5" height="21.5" fill="#4de0ff"/><rect x="887.20" y="783.65" width="21.5" height="21.5" fill="#4de0ff"/><rect x="908.05" y="783.65" width="21.5" height="21.5" fill="#4de0ff"/><rect x="928.90" y="783.65" width="21.5" height="21.5" fill="#4de0ff"/><rect x="949.75" y="783.65" width="21.5" height="21.5" fill="#4de0ff"/><rect x="970.60" y="783.65" width="21.5" height="21.5" fill="#4de0ff"/><rect x="991.45" y="783.65" width="21.5" height="21.5" fill="#4de0ff"/><rect x="1012.30" y="783.65" width="21.5" height="21.5" fill="#4de0ff"/><rect x="1033.15" y="783.65" width="21.5" height="21.5" fill="#4de0ff"/><rect x="1054.00" y="783.65" width="21.5" height="21.5" fill="#4de0ff"/><rect x="637.00" y="804.50" width="21.5" height="21.5" fill="#cc00fa"/><rect x="657.85" y="804.50" width="21.5" height="21.5" fill="#cc00fa"/><rect x="678.70" y="804.50" width="21.5" height="21.5" fill="#cc00fa"/><rect x="699.55" y="804.50" width="21.5" height="21.5" fill="#4de0ff"/><rect x="720.40" y="804.50" width="21.5" height="21.5" fill="#4de0ff"/><rect x="741.25" y="804.50" width="21.5" height="21.5" fill="#4de0ff"/><rect x="762.10" y="804.50" width="21.5" height="21.5" fill="#4de0ff"/><rect x="782.95" y="804.50" width="21.5" height="21.5" fill="#4de0ff"/><rect x="803.80" y="804.50" width="21.5" height="21.5" fill="#4de0ff"/><rect x="824.65" y="804.50" width="21.5" height="21.5" fill="#4de0ff"/><rect x="845.50" y="804.50" width="21.5" height="21.5" fill="#4de0ff"/><rect x="866.35" y="804.50" width="21.5" height="21.5" fill="#4de0ff"/><rect x="887.20" y="804.50" width="21.5" height="21.5" fill="#4de0ff"/><rect x="908.05" y="804.50" width="21.5" height="21.5" fill="#4de0ff"/><rect x="928.90" y="804.50" width="21.5" height="21.5" fill="#4de0ff"/><rect x="949.75" y="804.50" width="21.5" height="21.5" fill="#4de0ff"/><rect x="970.60" y="804.50" width="21.5" height="21.5" fill="#4de0ff"/><rect x="991.45" y="804.50" width="21.5" height="21.5" fill="#4de0ff"/><rect x="1012.30" y="804.50" width="21.5" height="21.5" fill="#4de0ff"/><rect x="1033.15" y="804.50" width="21.5" height="21.5" fill="#4de0ff"/><rect x="1054.00" y="804.50" width="21.5" height="21.5" fill="#4de0ff"/><rect x="637.00" y="825.35" width="21.5" height="21.5" fill="#cc00fa"/><rect x="657.85" y="825.35" width="21.5" height="21.5" fill="#4de0ff"/><rect x="678.70" y="825.35" width="21.5" height="21.5" fill="#4de0ff"/><rect x="699.55" y="825.35" width="21.5" height="21.5" fill="#4de0ff"/><rect x="720.40" y="825.35" width="21.5" height="21.5" fill="#4de0ff"/><rect x="741.25" y="825.35" width="21.5" height="21.5" fill="#4de0ff"/><rect x="762.10" y="825.35" width="21.5" height="21.5" fill="#4de0ff"/><rect x="782.95" y="825.35" width="21.5" height="21.5" fill="#4de0ff"/><rect x="803.80" y="825.35" width="21.5" height="21.5" fill="#4de0ff"/><rect x="824.65" y="825.35" width="21.5" height="21.5" fill="#4de0ff"/><rect x="845.50" y="825.35" width="21.5" height="21.5" fill="#4de0ff"/><rect x="866.35" y="825.35" width="21.5" height="21.5" fill="#4de0ff"/><rect x="887.20" y="825.35" width="21.5" height="21.5" fill="#4de0ff"/><rect x="908.05" y="825.35" width="21.5" height="21.5" fill="#4de0ff"/><rect x="928.90" y="825.35" width="21.5" height="21.5" fill="#4de0ff"/><rect x="949.75" y="825.35" width="21.5" height="21.5" fill="#4de0ff"/><rect x="970.60" y="825.35" width="21.5" height="21.5" fill="#4de0ff"/><rect x="991.45" y="825.35" width="21.5" height="21.5" fill="#4de0ff"/><rect x="1012.30" y="825.35" width="21.5" height="21.5" fill="#4de0ff"/><rect x="1033.15" y="825.35" width="21.5" height="21.5" fill="#4de0ff"/><rect x="1054.00" y="825.35" width="21.5" height="21.5" fill="#4de0ff"/><rect x="637.00" y="846.20" width="21.5" height="21.5" fill="#cc00fa"/><rect x="657.85" y="846.20" width="21.5" height="21.5" fill="#4de0ff"/><rect x="678.70" y="846.20" width="21.5" height="21.5" fill="#4de0ff"/><rect x="699.55" y="846.20" width="21.5" height="21.5" fill="#4de0ff"/><rect x="720.40" y="846.20" width="21.5" height="21.5" fill="#4de0ff"/><rect x="741.25" y="846.20" width="21.5" height="21.5" fill="#4de0ff"/><rect x="762.10" y="846.20" width="21.5" height="21.5" fill="#4de0ff"/><rect x="782.95" y="846.20" width="21.5" height="21.5" fill="#4de0ff"/><rect x="803.80" y="846.20" width="21.5" height="21.5" fill="#4de0ff"/><rect x="824.65" y="846.20" width="21.5" height="21.5" fill="#4de0ff"/><rect x="845.50" y="846.20" width="21.5" height="21.5" fill="#4de0ff"/><rect x="866.35" y="846.20" width="21.5" height="21.5" fill="#4de0ff"/><rect x="887.20" y="846.20" width="21.5" height="21.5" fill="#4de0ff"/><rect x="908.05" y="846.20" width="21.5" height="21.5" fill="#4de0ff"/><rect x="928.90" y="846.20" width="21.5" height="21.5" fill="#5ccaf8"/><rect x="949.75" y="846.20" width="21.5" height="21.5" fill="#4de0ff"/><rect x="970.60" y="846.20" width="21.5" height="21.5" fill="#4de0ff"/><rect x="991.45" y="846.20" width="21.5" height="21.5" fill="#4de0ff"/><rect x="1012.30" y="846.20" width="21.5" height="21.5" fill="#4de0ff"/><rect x="1033.15" y="846.20" width="21.5" height="21.5" fill="#4de0ff"/><rect x="1054.00" y="846.20" width="21.5" height="21.5" fill="#4de0ff"/><rect x="637.00" y="867.05" width="21.5" height="21.5" fill="#cc00fa"/><rect x="657.85" y="867.05" width="21.5" height="21.5" fill="#4de0ff"/><rect x="678.70" y="867.05" width="21.5" height="21.5" fill="#4de0ff"/><rect x="699.55" y="867.05" width="21.5" height="21.5" fill="#4de0ff"/><rect x="720.40" y="867.05" width="21.5" height="21.5" fill="#4de0ff"/><rect x="741.25" y="867.05" width="21.5" height="21.5" fill="#4de0ff"/><rect x="762.10" y="867.05" width="21.5" height="21.5" fill="#4de0ff"/><rect x="782.95" y="867.05" width="21.5" height="21.5" fill="#4de0ff"/><rect x="803.80" y="867.05" width="21.5" height="21.5" fill="#4de0ff"/><rect x="824.65" y="867.05" width="21.5" height="21.5" fill="#4de0ff"/><rect x="845.50" y="867.05" width="21.5" height="21.5" fill="#4de0ff"/><rect x="866.35" y="867.05" width="21.5" height="21.5" fill="#4de0ff"/><rect x="887.20" y="867.05" width="21.5" height="21.5" fill="#4de0ff"/><rect x="908.05" y="867.05" width="21.5" height="21.5" fill="#4de0ff"/><rect x="928.90" y="867.05" width="21.5" height="21.5" fill="#4de0ff"/><rect x="949.75" y="867.05" width="21.5" height="21.5" fill="#4de0ff"/><rect x="970.60" y="867.05" width="21.5" height="21.5" fill="#4de0ff"/><rect x="991.45" y="867.05" width="21.5" height="21.5" fill="#4de0ff"/><rect x="1012.30" y="867.05" width="21.5" height="21.5" fill="#4de0ff"/><rect x="1033.15" y="867.05" width="21.5" height="21.5" fill="#4de0ff"/><rect x="1054.00" y="867.05" width="21.5" height="21.5" fill="#4de0ff"/><rect x="637.00" y="887.90" width="21.5" height="21.5" fill="#cc00fa"/><rect x="657.85" y="887.90" width="21.5" height="21.5" fill="#4de0ff"/><rect x="678.70" y="887.90" width="21.5" height="21.5" fill="#4de0ff"/><rect x="699.55" y="887.90" width="21.5" height="21.5" fill="#4de0ff"/><rect x="720.40" y="887.90" width="21.5" height="21.5" fill="#4de0ff"/><rect x="741.25" y="887.90" width="21.5" height="21.5" fill="#4de0ff"/><rect x="762.10" y="887.90" width="21.5" height="21.5" fill="#4de0ff"/><rect x="782.95" y="887.90" width="21.5" height="21.5" fill="#4de0ff"/><rect x="803.80" y="887.90" width="21.5" height="21.5" fill="#4de0ff"/><rect x="824.65" y="887.90" width="21.5" height="21.5" fill="#4de0ff"/><rect x="845.50" y="887.90" width="21.5" height="21.5" fill="#4de0ff"/><rect x="866.35" y="887.90" width="21.5" height="21.5" fill="#4de0ff"/><rect x="887.20" y="887.90" width="21.5" height="21.5" fill="#4de0ff"/><rect x="908.05" y="887.90" width="21.5" height="21.5" fill="#4de0ff"/><rect x="928.90" y="887.90" width="21.5" height="21.5" fill="#4de0ff"/><rect x="949.75" y="887.90" width="21.5" height="21.5" fill="#4de0ff"/><rect x="970.60" y="887.90" width="21.5" height="21.5" fill="#4de0ff"/><rect x="991.45" y="887.90" width="21.5" height="21.5" fill="#4de0ff"/><rect x="1012.30" y="887.90" width="21.5" height="21.5" fill="#4de0ff"/><rect x="1033.15" y="887.90" width="21.5" height="21.5" fill="#4de0ff"/><rect x="1054.00" y="887.90" width="21.5" height="21.5" fill="#4de0ff"/>
<path d="M637.00 480V900M640 470.90H1070M657.85 480V900M640 491.75H1070M678.70 480V900M640 512.60H1070M699.55 480V900M640 533.45H1070M720.40 480V900M640 554.30H1070M741.25 480V900M640 575.15H1070M762.10 480V900M640 596.00H1070M782.95 480V900M640 616.85H1070M803.80 480V900M640 637.70H1070M824.65 480V900M640 658.55H1070M845.50 480V900M640 679.40H1070M866.35 480V900M640 700.25H1070M887.20 480V900M640 721.10H1070M908.05 480V900M640 741.95H1070M928.90 480V900M640 762.80H1070M949.75 480V900M640 783.65H1070M970.60 480V900M640 804.50H1070M991.45 480V900M640 825.35H1070M1012.30 480V900M640 846.20H1070M1033.15 480V900M640 867.05H1070M1054.00 480V900M640 887.90H1070M1074.85 480V900M640 908.75H1070" stroke="rgba(20,40,80,0.075)" stroke-width="1" fill="none" shape-rendering="crispEdges"/>
</g>
<circle cx="855.5" cy="690.5" r="187.5" fill="none" stroke="#fff" stroke-width="5"/>
<rect x="846.00" y="679.90" width="19.85" height="19.85" fill="none" stroke="#fff" stroke-width="1.6"/>
<rect x="844.90" y="678.80" width="22.05" height="22.05" fill="none" stroke="rgba(0,0,0,0.25)" stroke-width="0.7"/>
</svg>
<div class="tip"><span>Turquoise Blue: #4de0ff</span><div class="tsw"></div></div>
<div id="panel">
<div class="phead"></div>
<div class="pfoot"></div>
<svg class="abs" style="left:8px;top:9px" width="21" height="21" viewBox="0 0 21 21"><circle cx="10.5" cy="10.5" r="8.8" fill="none" stroke="#2c0a3c" stroke-width="1.3"/><circle cx="10.5" cy="10.5" r="0.9" fill="#2c0a3c"/></svg>
<svg class="abs" style="left:151px;top:12px" width="16" height="14" viewBox="0 0 16 14" stroke="#3a2048" stroke-width="1.5"><path d="M1 1.2 H15 M1 7 H15 M1 12.8 H15"/></svg>
<div class="abs" style="left:291px;top:9.5px;width:19px;height:19px;border-radius:50%;background:conic-gradient(from 0deg,#ff3030,#ffb000,#e0e000,#40d040,#00c0ff,#3050ff,#c000ff,#ff3030)"></div>
<div class="abs" style="left:296.5px;top:15px;width:8px;height:8px;border-radius:50%;background:#d6a8f0"></div>
<div class="dd">
 <svg class="abs" style="left:5px;top:6px" width="16" height="15" viewBox="0 0 16 15" fill="none" stroke="#3d9ee8" stroke-width="1.2"><rect x="1" y="1" width="9" height="9" rx="2"/><rect x="5" y="5" width="9" height="9" rx="2" fill="#fff"/></svg>
 <div class="abs" style="left:25px;top:3px;width:1px;height:20px;background:#f0f4f8"></div>
 <svg class="abs" style="left:32.5px;top:6px" width="14" height="14" viewBox="0 0 14 14"><rect width="14" height="14" rx="1.5" fill="#ef7522"/><path fill="#fff" d="M3 3.5 C5 5.5 7 7 8.5 7.6 C7 6.3 5.5 4.8 4.5 3.6 C6 4.8 7.8 6 9.5 6.8 C9.8 5.3 9.4 4 8.6 3 C10.6 4.3 11.2 6.5 10.8 8.2 C11.6 9 11.8 10 11.6 10.6 C11 10 10.2 9.9 9.6 10.1 C7.5 11 5 10.3 3 8.4 C4.6 9.1 6.4 9.3 7.6 8.8 C6 8 4.3 6 3 3.5Z"/></svg>
 <div class="abs" style="left:53px;top:6.5px;font-size:12.5px;line-height:15px;color:#222">Color format</div>
 <svg class="abs" style="left:280px;top:10px" width="10" height="6" viewBox="0 0 10 6"><path d="M1 0.8 L5 4.8 L9 0.8" fill="none" stroke="#777" stroke-width="1.2"/></svg>
</div>
<div class="abs" style="left:9.2px;top:86.0px;width:10px;height:10px;border-radius:50%;border:1px solid #e2e2e2"></div><div class="lbl" style="left:26px;top:82.7px">Color History</div><svg class="abs" style="left:290px;top:87.3px" width="20" height="6" viewBox="0 0 20 6" fill="#bdbdbd"><circle cx="5" cy="3" r="1.15"/><circle cx="10.3" cy="3" r="1.15"/><circle cx="15.9" cy="3" r="1.15"/></svg><div class="sw" style="top:108.0px"><div style="flex:1;background:#f0d2c8"></div><div style="flex:1;background:#fac8a8"></div><div style="flex:1;background:#d6d6dc"></div><div style="flex:1;background:#e07858"></div><div style="flex:1;background:#f52580"></div><div style="flex:1;background:#404560"></div><div style="flex:1;background:#0a0614"></div><div style="flex:1;background:#3a0a18"></div><div style="flex:1;background:#f8b4a0"></div><div style="flex:1;background:#f8b4a0"></div><div style="flex:1;background:#a0a0a4"></div><div style="flex:1;background:#720a0e"></div><div style="flex:1;background:#3a10a8"></div><div style="flex:1;background:#a80008"></div><div style="flex:1;background:#98c0d0"></div><div style="flex:1;background:#e09494"></div><div style="flex:1;background:#7e8080"></div><div style="flex:1;background:#e00008"></div><div style="flex:1;background:#5a6470"></div><div style="flex:1;background:#e03010"></div><div style="flex:1;background:#6a6878"></div><div style="flex:1;background:#4060f0"></div><div style="flex:1;background:#708a98"></div><div style="flex:1;background:#404048"></div><div style="flex:1;background:#b08088"></div><div style="flex:1;background:#5a6070"></div><div style="flex:1;background:#e86010"></div><div style="flex:1;background:#80a898"></div><div style="flex:1;background:#f08c10"></div><div style="flex:1;background:#50c4f0"></div><div style="flex:1;background:#f8a010"></div><div style="flex:1;background:#ffc000"></div><div style="flex:1;background:#f2d6cc"></div></div><div class="sep" style="top:149.0px"></div>
<svg class="abs" style="left:8.7px;top:162.2px" width="11" height="11" viewBox="0 0 11 11"><circle cx="5.5" cy="5.5" r="5.5" fill="#111"/><path d="M3 5.7 L4.8 7.4 L8 3.9" fill="none" stroke="#fff" stroke-width="1.4"/></svg><div class="lbl" style="left:26px;top:159.4px">SF Streets</div><svg class="abs" style="left:290px;top:164.0px" width="20" height="6" viewBox="0 0 20 6" fill="#bdbdbd"><circle cx="5" cy="3" r="1.15"/><circle cx="10.3" cy="3" r="1.15"/><circle cx="15.9" cy="3" r="1.15"/></svg><div class="sw" style="top:184.7px"><div style="flex:1;background:#f4d4cc"></div><div style="flex:1;background:#f5b09c"></div><div style="flex:1;background:#9bbfcc"></div><div style="flex:1;background:#6f8792"></div><div style="flex:1;background:#596069"></div></div><div class="sep" style="top:225.7px"></div>
<svg class="abs" style="left:10px;top:238.3px" width="9" height="11" viewBox="0 0 9 11"><path d="M2 5 V3.5 A2.5 2.5 0 0 1 7 3.5 V5" fill="none" stroke="#111" stroke-width="1.3"/><rect x="0.5" y="5" width="8" height="5.5" rx="1" fill="#111"/></svg><svg class="abs" style="left:26px;top:236.3px" width="16" height="16" viewBox="0 0 16 16"><path fill="#e0401a" d="M8 0.5 L9.3 3.6 L11 2.8 L10.6 6 L13.4 4.6 L12.8 7 L15.5 7.4 L13 9.6 L13.6 11 L9.2 10.6 L8.6 12.6 V15.5 H7.4 V12.6 L6.8 10.6 L2.4 11 L3 9.6 L0.5 7.4 L3.2 7 L2.6 4.6 L5.4 6 L5 2.8 L6.7 3.6 Z"/><path fill="#f59a20" d="M8 4 L9 7 L8 11 L7 7Z"/></svg><div class="lbl" style="left:46px;top:236.0px">Autumn colors</div><svg class="abs" style="left:182px;top:236.3px" width="126" height="16" viewBox="0 0 126 16" fill="none" stroke="#c4c4c4" stroke-width="1.1"><path d="M13 3.2 C11.5 1.8 9 1.8 7.5 3.5 C6 1.8 3.5 1.8 2 3.2 C0.3 5 0.8 7.5 2.5 9.2 L7.5 14 L12.5 9.2 C14.2 7.5 14.7 5 13 3.2Z" transform="translate(4.5,0)"/><rect x="35.5" y="2" width="10" height="12" rx="1"/><path d="M42 2 V14"/><path d="M64.5 7 V4.5 A2.5 2.5 0 0 1 69.5 4.5"/><rect x="63" y="7" width="10" height="7" rx="1"/><path d="M68 9.5 V11.5"/><path d="M90 3.5 H101 M93.5 3.5 V2 H97.5 V3.5 M91 3.5 L91.8 14 H99.2 L100 3.5 M94 6 V12 M97 6 V12"/><circle cx="122.5" cy="4.5" r="2.7"/><circle cx="116" cy="11.5" r="2.7"/><path d="M115 4.5 H119.8 M118.7 11.5 H125.5"/></svg><div class="sw" style="top:261.3px"><div style="flex:1;background:#0a0a18"></div><div style="flex:1;background:#3a0a14"></div><div style="flex:1;background:#6a0810"></div><div style="flex:1;background:#a00808"></div><div style="flex:1;background:#d80808"></div><div style="flex:1;background:#e03010"></div><div style="flex:1;background:#e86008"></div><div style="flex:1;background:#f08c10"></div><div style="flex:1;background:#f8a010"></div><div style="flex:1;background:#ffc010"></div></div><div class="sep" style="top:302.3px"></div>
<div class="abs" style="left:9.2px;top:316.0px;width:10px;height:10px;border-radius:50%;border:1px solid #e2e2e2"></div><div class="lbl" style="left:26px;top:312.7px">SF Streets Edited</div><svg class="abs" style="left:290px;top:317.3px" width="20" height="6" viewBox="0 0 20 6" fill="#bdbdbd"><circle cx="5" cy="3" r="1.15"/><circle cx="10.3" cy="3" r="1.15"/><circle cx="15.9" cy="3" r="1.15"/></svg><div class="sw" style="top:338.0px"><div style="flex:1;background:#fccab0"></div><div style="flex:1;background:#f5b0a0"></div><div style="flex:1;background:#e09898"></div><div style="flex:1;background:#b07e88"></div><div style="flex:1;background:#6a6470"></div></div><div class="sep" style="top:379.0px"></div>
<div class="abs" style="left:9.2px;top:392.7px;width:10px;height:10px;border-radius:50%;border:1px solid #e2e2e2"></div><div class="lbl" style="left:26px;top:389.4px">Logo Colors&nbsp; Scheme (to consider)</div><svg class="abs" style="left:290px;top:394.0px" width="20" height="6" viewBox="0 0 20 6" fill="#bdbdbd"><circle cx="5" cy="3" r="1.15"/><circle cx="10.3" cy="3" r="1.15"/><circle cx="15.9" cy="3" r="1.15"/></svg><div class="sw" style="top:414.7px"><div style="flex:1;background:#e07858"></div><div style="flex:1;background:#3e4058"></div><div style="flex:1;background:#80b098"></div></div><div class="sep" style="top:455.7px"></div>
<div class="abs" style="left:9.2px;top:469.4px;width:10px;height:10px;border-radius:50%;border:1px solid #e2e2e2"></div><div class="lbl" style="left:26px;top:466.1px">Live Website</div><svg class="abs" style="left:290px;top:470.7px" width="20" height="6" viewBox="0 0 20 6" fill="#bdbdbd"><circle cx="5" cy="3" r="1.15"/><circle cx="10.3" cy="3" r="1.15"/><circle cx="15.9" cy="3" r="1.15"/></svg><div class="sw" style="top:491.4px"><div style="flex:1;background:#f52580"></div><div style="flex:1;background:#3a0aa0"></div><div style="flex:1;background:#4060ea"></div><div style="flex:1;background:#50c8f0"></div></div><div class="sep" style="top:532.4px"></div>
<div class="abs" style="left:9.2px;top:546.0px;width:10px;height:10px;border-radius:50%;border:1px solid #e2e2e2"></div><div class="lbl" style="left:26px;top:542.7px">Noir Illustrations</div><svg class="abs" style="left:290px;top:547.3px" width="20" height="6" viewBox="0 0 20 6" fill="#bdbdbd"><circle cx="5" cy="3" r="1.15"/><circle cx="10.3" cy="3" r="1.15"/><circle cx="15.9" cy="3" r="1.15"/></svg><div class="sw" style="top:568.0px"><div style="flex:1;background:#d6d6da"></div><div style="flex:1;background:#a0a2a6"></div><div style="flex:1;background:#7a7a80"></div><div style="flex:1;background:#5a5a62"></div><div style="flex:1;background:#404046"></div></div>
<svg class="abs" style="left:8px;top:620px" width="16" height="15" viewBox="0 0 16 15" fill="none" stroke="#9a62b0" stroke-width="1.2"><path d="M14 2.6 C12.3 0.8 9.7 0.9 8 2.9 C6.3 0.9 3.7 0.8 2 2.6 C0.2 4.6 0.7 7.2 2.6 9 L8 14 L13.4 9 C15.3 7.2 15.8 4.6 14 2.6Z"/></svg>
<svg class="abs" style="left:264px;top:620.5px" width="16" height="16" viewBox="0 0 16 16" fill="none" stroke="#9a62b0" stroke-width="1.1"><path d="M6.8 1 H9.2 L9.6 3 L11.2 3.7 L12.9 2.5 L14.6 4.2 L13.4 5.9 L14.1 7.5 L16 7.9 V10.1 L14.1 10.5 L13.4 12.1 L14.6 13.8 L12.9 15.5 L11.2 14.3 L9.6 15 L9.2 17 H6.8 L6.4 15 L4.8 14.3 L3.1 15.5 L1.4 13.8 L2.6 12.1 L1.9 10.5 L0 10.1 V7.9 L1.9 7.5 L2.6 5.9 L1.4 4.2 L3.1 2.5 L4.8 3.7 L6.4 3 Z" transform="translate(0.5,-1) scale(0.93)"/><circle cx="8" cy="8" r="2.2"/></svg>
<svg class="abs" style="left:295px;top:620px" width="16" height="16" viewBox="0 0 16 16" fill="none" stroke="#9a62b0" stroke-width="1.2" stroke-linecap="round"><path d="M8 1 V7.5"/><path d="M4.6 3.4 A6.2 6.2 0 1 0 11.4 3.4"/></svg>
</div>
<div id="dock"></div><div class="dsep" style="left:1043px"></div><div class="dsep" style="left:1239px"></div><svg class="abs" style="left:388px;top:970px" width="65" height="65" viewBox="0 0 65 65"><defs><linearGradient id="fb" x1="0" y1="0" x2="0" y2="1"><stop offset="0" stop-color="#22b4fa"/><stop offset="1" stop-color="#1a6fe6"/></linearGradient>
<clipPath id="r14"><rect width="65" height="65" rx="14"/></clipPath></defs>
<g clip-path="url(#r14)"><rect width="65" height="65" fill="url(#fb)"/>
<path d="M32 0 C28 8 25 18 25 38 L34 38 C33 48 35 58 37 65 L65 65 L65 0 Z" fill="#e6e8ee"/>
<path d="M12.5 44 C22 53 41 53.5 51 44" fill="none" stroke="#1a1a2a" stroke-width="1.9" stroke-linecap="round"/>
<rect x="16.3" y="19.5" width="2.8" height="6.5" rx="1.4" fill="#1a1a2a"/><rect x="45.5" y="19.5" width="2.8" height="6.5" rx="1.4" fill="#1a1a2a"/></g></svg><svg class="abs" style="left:470px;top:970px" width="65" height="65" viewBox="0 0 65 65"><circle cx="32.3" cy="33" r="32" fill="#1ea54a"/>
<path d="M32.3 33 L4.6 17 A32 32 0 0 1 60 17 Z" fill="#e34a33"/>
<path d="M32.3 33 L60 17 A32 32 0 0 1 32.3 65 Z" fill="#fbc330"/>
<path d="M32.3 33 L60 17 L32.3 17 Z" fill="#e34a33"/>
<path d="M32.3 33 L18 45 L32.3 65 Z" fill="#1ea54a"/>
<circle cx="32.3" cy="33" r="14.5" fill="#fff"/><circle cx="32.3" cy="33" r="11.5" fill="#4b86e8"/></svg><svg class="abs" style="left:549px;top:970px" width="65" height="65" viewBox="0 0 65 65"><defs><linearGradient id="ab" x1="0" y1="0" x2="0" y2="1"><stop offset="0" stop-color="#1cb0f8"/><stop offset="1" stop-color="#1a6ae4"/></linearGradient></defs>
<rect width="65" height="65" rx="14" fill="url(#ab)"/>
<g stroke="#fff" stroke-width="4.2" stroke-linecap="round" fill="none"><path d="M28 13 L49 51"/><path d="M37 13 L17 48"/><path d="M10 41 H55"/></g></svg><svg class="abs" style="left:630px;top:970px" width="65" height="65" viewBox="0 0 65 65"><defs><linearGradient id="mg" x1="0" y1="0" x2="0" y2="1"><stop offset="0" stop-color="#5cf070"/><stop offset="1" stop-color="#16c42a"/></linearGradient><linearGradient id="mb" x1="0" y1="0" x2="0" y2="1"><stop offset="0" stop-color="#f6f8f4"/><stop offset="1" stop-color="#d4ead0"/></linearGradient></defs>
<rect width="65" height="65" rx="14" fill="url(#mg)"/>
<ellipse cx="32.5" cy="33" rx="23.5" ry="19.5" fill="#10a020" opacity="0.35"/>
<path d="M15 53 C20 50 22 47 22.5 45 L29 48 C25 52 20 53.5 15 53Z" fill="#e4f0e0"/>
<ellipse cx="32.3" cy="30.9" rx="23.5" ry="20" fill="url(#mb)"/></svg><svg class="abs" style="left:711px;top:970.5px" width="65" height="65" viewBox="0 0 65 65"><defs><clipPath id="mp"><rect width="65" height="65" rx="14"/></clipPath></defs><g clip-path="url(#mp)">
<rect width="65" height="65" fill="#e6e4e2"/>
<rect x="0" y="0" width="10" height="65" fill="#f0c8c4"/><rect x="0" y="0" width="10" height="10" fill="#eee8e4"/><path d="M0 10 L10 13 V36 L0 33Z" fill="#f8d23a"/>
<circle cx="68" cy="-4" r="49" fill="#7ed650"/><circle cx="68" cy="-4" r="40" fill="#ecece6"/><circle cx="68" cy="-4" r="26" fill="#86e05a"/>
<path d="M23 26 C36 30 52 44 65 55 L65 65 L52 65 C42 56 32 50 23 48 Z" fill="#f8d43c"/>
<rect x="9.5" y="0" width="14" height="65" fill="#fbfbfb"/><rect x="12.2" y="0" width="8.6" height="33" fill="#1a7ee6"/>
<circle cx="16.5" cy="39.5" r="11" fill="#f8f8f8"/><circle cx="16.5" cy="39.5" r="7" fill="#1a78e0"/>
<path d="M37 46 C43 43 55 43 61 46 V52 C61 58 54 62 49 64 C44 62 37 58 37 52Z" fill="#fff"/><path d="M39 48 C44 45.5 54 45.5 59 48 V52 C59 57 53 60.5 49 62 C45 60.5 39 57 39 52Z" fill="#2a6ac8"/><path d="M39 48 C44 45.5 54 45.5 59 48 V50.5 H39Z" fill="#e03a30"/>
<text x="49" y="58.5" font-size="7.5" font-weight="bold" fill="#fff" text-anchor="middle" font-family="Liberation Sans">280</text></g></svg><svg class="abs" style="left:791px;top:971px" width="65" height="65" viewBox="0 0 65 65"><rect x="58" y="10" width="6" height="12" rx="1.5" fill="#f2e6ec"/><rect x="58" y="21" width="6" height="12" fill="#5cc4f0"/><rect x="58" y="32" width="6" height="11" fill="#f08a30"/><rect x="58" y="42" width="6" height="12" rx="1.5" fill="#4cd04c"/>
<rect x="1" y="1" width="60" height="63" rx="12" fill="#b5884c"/>
<circle cx="33.5" cy="31.5" r="20" fill="none" stroke="#9c7038" stroke-width="1.4"/><ellipse cx="33.5" cy="27" rx="6" ry="7" fill="#a47840"/><path d="M19.5 45 C24 38 43 38 47.5 45 C43 51 24 51 19.5 45Z" fill="#9c7038"/></svg><svg class="abs" style="left:872px;top:970px" width="65" height="65" viewBox="0 0 65 65"><defs><linearGradient id="ml" x1="0" y1="0" x2="0" y2="1"><stop offset="0" stop-color="#1a8cf6"/><stop offset="1" stop-color="#1ec4f8"/></linearGradient><linearGradient id="en" x1="0" y1="0" x2="0" y2="1"><stop offset="0" stop-color="#fbfbfb"/><stop offset="1" stop-color="#dcdcdc"/></linearGradient></defs>
<rect width="65" height="65" rx="14" fill="url(#ml)"/><rect x="9" y="18" width="47" height="30" rx="2" fill="url(#en)"/>
<path d="M9.5 19 L32.5 37 L55.5 19 M10 47 L26 32 M55 47 L39 32" fill="none" stroke="#b8b8b8" stroke-width="1"/></svg><svg class="abs" style="left:952px;top:970px" width="65" height="65" viewBox="0 0 65 65"><defs><linearGradient id="pc" x1="0" y1="0" x2="0" y2="1"><stop offset="0" stop-color="#c46ef0"/><stop offset="1" stop-color="#8a2fd2"/></linearGradient></defs>
<rect width="65" height="65" rx="14" fill="url(#pc)"/>
<g fill="none" stroke="#fff" stroke-width="2.6"><path d="M20 48 A21 21 0 1 1 45 48"/><path d="M24.5 41.5 A13.5 13.5 0 1 1 40.5 41.5"/></g>
<circle cx="32.5" cy="27.5" r="5" fill="#fff"/><path d="M28.5 37 C28.5 34 36.5 34 36.5 37 L35 53 C35 55 30 55 30 53Z" fill="#fff"/></svg><svg class="abs" style="left:1067px;top:971px" width="65" height="65" viewBox="0 0 65 65"><rect width="65" height="65" rx="14" fill="#fbfbfb"/>
<circle cx="13" cy="16" r="5.5" fill="#fff" stroke="#2a7de8" stroke-width="1.4"/><circle cx="13" cy="16" r="3.5" fill="#2a7de8"/>
<circle cx="13" cy="32.5" r="5.5" fill="#fff" stroke="#e83a30" stroke-width="1.4"/><circle cx="13" cy="32.5" r="3.5" fill="#e83a30"/>
<circle cx="13" cy="49" r="5.5" fill="#fff" stroke="#f0a020" stroke-width="1.4"/><circle cx="13" cy="49" r="3.5" fill="#f0a020"/>
<path d="M25 16 H58 M25 32.5 H58 M25 49 H58" stroke="#c8c8c8" stroke-width="1.2"/></svg><svg class="abs" style="left:1148px;top:971px" width="65" height="65" viewBox="0 0 65 65"><defs><clipPath id="nt"><rect width="65" height="65" rx="14"/></clipPath><linearGradient id="ny" x1="0" y1="0" x2="0" y2="1"><stop offset="0" stop-color="#ffd23a"/><stop offset="1" stop-color="#f8b818"/></linearGradient></defs>
<g clip-path="url(#nt)"><rect width="65" height="65" fill="#f6f6f4"/><rect width="65" height="17" fill="url(#ny)"/>
<path d="M0 17.5 H65" stroke="#d8d0b0" stroke-width="1" stroke-dasharray="1 1.2"/><path d="M0 33 H65 M0 49 H65" stroke="#d4d4d4" stroke-width="1"/></g></svg><svg class="abs" style="left:1264px;top:970px" width="65" height="65" viewBox="0 0 65 65"><defs><linearGradient id="sp" x1="0" y1="0" x2="0" y2="1"><stop offset="0" stop-color="#e4e6ea"/><stop offset="1" stop-color="#a4a6aa"/></linearGradient></defs>
<rect width="65" height="65" rx="14" fill="url(#sp)"/>
<circle cx="32.5" cy="33" r="26" fill="#9a9a9e"/>
<circle cx="32.5" cy="33" r="24.5" fill="none" stroke="#4a4a4e" stroke-width="5"/><rect x="31.7" y="4.2" width="1.6" height="4.6" fill="#3a3a3c" transform="rotate(0 32.5 33)"/><rect x="31.7" y="4.2" width="1.6" height="4.6" fill="#3a3a3c" transform="rotate(6 32.5 33)"/><rect x="31.7" y="4.2" width="1.6" height="4.6" fill="#3a3a3c" transform="rotate(12 32.5 33)"/><rect x="31.7" y="4.2" width="1.6" height="4.6" fill="#3a3a3c" transform="rotate(18 32.5 33)"/><rect x="31.7" y="4.2" width="1.6" height="4.6" fill="#3a3a3c" transform="rotate(24 32.5 33)"/><rect x="31.7" y="4.2" width="1.6" height="4.6" fill="#3a3a3c" transform="rotate(30 32.5 33)"/><rect x="31.7" y="4.2" width="1.6" height="4.6" fill="#3a3a3c" transform="rotate(36 32.5 33)"/><rect x="31.7" y="4.2" width="1.6" height="4.6" fill="#3a3a3c" transform="rotate(42 32.5 33)"/><rect x="31.7" y="4.2" width="1.6" height="4.6" fill="#3a3a3c" transform="rotate(48 32.5 33)"/><rect x="31.7" y="4.2" width="1.6" height="4.6" fill="#3a3a3c" transform="rotate(54 32.5 33)"/><rect x="31.7" y="4.2" width="1.6" height="4.6" fill="#3a3a3c" transform="rotate(60 32.5 33)"/><rect x="31.7" y="4.2" width="1.6" height="4.6" fill="#3a3a3c" transform="rotate(66 32.5 33)"/><rect x="31.7" y="4.2" width="1.6" height="4.6" fill="#3a3a3c" transform="rotate(72 32.5 33)"/><rect x="31.7" y="4.2" width="1.6" height="4.6" fill="#3a3a3c" transform="rotate(78 32.5 33)"/><rect x="31.7" y="4.2" width="1.6" height="4.6" fill="#3a3a3c" transform="rotate(84 32.5 33)"/><rect x="31.7" y="4.2" width="1.6" height="4.6" fill="#3a3a3c" transform="rotate(90 32.5 33)"/><rect x="31.7" y="4.2" width="1.6" height="4.6" fill="#3a3a3c" transform="rotate(96 32.5 33)"/><rect x="31.7" y="4.2" width="1.6" height="4.6" fill="#3a3a3c" transform="rotate(102 32.5 33)"/><rect x="31.7" y="4.2" width="1.6" height="4.6" fill="#3a3a3c" transform="rotate(108 32.5 33)"/><rect x="31.7" y="4.2" width="1.6" height="4.6" fill="#3a3a3c" transform="rotate(114 32.5 33)"/><rect x="31.7" y="4.2" width="1.6" height="4.6" fill="#3a3a3c" transform="rotate(120 32.5 33)"/><rect x="31.7" y="4.2" width="1.6" height="4.6" fill="#3a3a3c" transform="rotate(126 32.5 33)"/><rect x="31.7" y="4.2" width="1.6" height="4.6" fill="#3a3a3c" transform="rotate(132 32.5 33)"/><rect x="31.7" y="4.2" width="1.6" height="4.6" fill="#3a3a3c" transform="rotate(138 32.5 33)"/><rect x="31.7" y="4.2" width="1.6" height="4.6" fill="#3a3a3c" transform="rotate(144 32.5 33)"/><rect x="31.7" y="4.2" width="1.6" height="4.6" fill="#3a3a3c" transform="rotate(150 32.5 33)"/><rect x="31.7" y="4.2" width="1.6" height="4.6" fill="#3a3a3c" transform="rotate(156 32.5 33)"/><rect x="31.7" y="4.2" width="1.6" height="4.6" fill="#3a3a3c" transform="rotate(162 32.5 33)"/><rect x="31.7" y="4.2" width="1.6" height="4.6" fill="#3a3a3c" transform="rotate(168 32.5 33)"/><rect x="31.7" y="4.2" width="1.6" height="4.6" fill="#3a3a3c" transform="rotate(174 32.5 33)"/><rect x="31.7" y="4.2" width="1.6" height="4.6" fill="#3a3a3c" transform="rotate(180 32.5 33)"/><rect x="31.7" y="4.2" width="1.6" height="4.6" fill="#3a3a3c" transform="rotate(186 32.5 33)"/><rect x="31.7" y="4.2" width="1.6" height="4.6" fill="#3a3a3c" transform="rotate(192 32.5 33)"/><rect x="31.7" y="4.2" width="1.6" height="4.6" fill="#3a3a3c" transform="rotate(198 32.5 33)"/><rect x="31.7" y="4.2" width="1.6" height="4.6" fill="#3a3a3c" transform="rotate(204 32.5 33)"/><rect x="31.7" y="4.2" width="1.6" height="4.6" fill="#3a3a3c" transform="rotate(210 32.5 33)"/><rect x="31.7" y="4.2" width="1.6" height="4.6" fill="#3a3a3c" transform="rotate(216 32.5 33)"/><rect x="31.7" y="4.2" width="1.6" height="4.6" fill="#3a3a3c" transform="rotate(222 32.5 33)"/><rect x="31.7" y="4.2" width="1.6" height="4.6" fill="#3a3a3c" transform="rotate(228 32.5 33)"/><rect x="31.7" y="4.2" width="1.6" height="4.6" fill="#3a3a3c" transform="rotate(234 32.5 33)"/><rect x="31.7" y="4.2" width="1.6" height="4.6" fill="#3a3a3c" transform="rotate(240 32.5 33)"/><rect x="31.7" y="4.2" width="1.6" height="4.6" fill="#3a3a3c" transform="rotate(246 32.5 33)"/><rect x="31.7" y="4.2" width="1.6" height="4.6" fill="#3a3a3c" transform="rotate(252 32.5 33)"/><rect x="31.7" y="4.2" width="1.6" height="4.6" fill="#3a3a3c" transform="rotate(258 32.5 33)"/><rect x="31.7" y="4.2" width="1.6" height="4.6" fill="#3a3a3c" transform="rotate(264 32.5 33)"/><rect x="31.7" y="4.2" width="1.6" height="4.6" fill="#3a3a3c" transform="rotate(270 32.5 33)"/><rect x="31.7" y="4.2" width="1.6" height="4.6" fill="#3a3a3c" transform="rotate(276 32.5 33)"/><rect x="31.7" y="4.2" width="1.6" height="4.6" fill="#3a3a3c" transform="rotate(282 32.5 33)"/><rect x="31.7" y="4.2" width="1.6" height="4.6" fill="#3a3a3c" transform="rotate(288 32.5 33)"/><rect x="31.7" y="4.2" width="1.6" height="4.6" fill="#3a3a3c" transform="rotate(294 32.5 33)"/><rect x="31.7" y="4.2" width="1.6" height="4.6" fill="#3a3a3c" transform="rotate(300 32.5 33)"/><rect x="31.7" y="4.2" width="1.6" height="4.6" fill="#3a3a3c" transform="rotate(306 32.5 33)"/><rect x="31.7" y="4.2" width="1.6" height="4.6" fill="#3a3a3c" transform="rotate(312 32.5 33)"/><rect x="31.7" y="4.2" width="1.6" height="4.6" fill="#3a3a3c" transform="rotate(318 32.5 33)"/><rect x="31.7" y="4.2" width="1.6" height="4.6" fill="#3a3a3c" transform="rotate(324 32.5 33)"/><rect x="31.7" y="4.2" width="1.6" height="4.6" fill="#3a3a3c" transform="rotate(330 32.5 33)"/><rect x="31.7" y="4.2" width="1.6" height="4.6" fill="#3a3a3c" transform="rotate(336 32.5 33)"/><rect x="31.7" y="4.2" width="1.6" height="4.6" fill="#3a3a3c" transform="rotate(342 32.5 33)"/><rect x="31.7" y="4.2" width="1.6" height="4.6" fill="#3a3a3c" transform="rotate(348 32.5 33)"/><rect x="31.7" y="4.2" width="1.6" height="4.6" fill="#3a3a3c" transform="rotate(354 32.5 33)"/>
<circle cx="32.5" cy="33" r="18.5" fill="none" stroke="#505054" stroke-width="3"/>
<circle cx="32.5" cy="33" r="14" fill="#6e6e72"/><circle cx="32.5" cy="33" r="10" fill="#88888c"/>
<g stroke="#a8a8ac" stroke-width="2.6"><path d="M32.5 33 L23 15.5"/><path d="M32.5 33 L52 33"/><path d="M32.5 33 L22.5 50"/></g><circle cx="32.5" cy="33" r="1.8" fill="#555"/></svg><svg class="abs" style="left:1347.5px;top:968px" width="59" height="71" viewBox="0 0 59 71"><defs><linearGradient id="tr" x1="0" y1="0" x2="1" y2="0"><stop offset="0" stop-color="#dcd6e2"/><stop offset="0.55" stop-color="#efecf2"/><stop offset="1" stop-color="#d6d0dc"/></linearGradient></defs>
<path d="M0.5 6 L8 66 C8.5 71 50.5 71 51 66 L58.5 6 Z" fill="url(#tr)"/><ellipse cx="29.5" cy="6.5" rx="29" ry="5.8" fill="#e6d4ee"/><ellipse cx="29.5" cy="7.2" rx="26" ry="4.2" fill="#d8bfe6"/></svg><div class="ddot" style="left:419.0px"></div><div class="ddot" style="left:499.1px"></div><div class="ddot" style="left:579.9px"></div><div class="ddot" style="left:660.0px"></div><div class="ddot" style="left:740.5px"></div><div class="ddot" style="left:821.0px"></div><div class="ddot" style="left:901.5px"></div><div class="ddot" style="left:982.0px"></div><div class="ddot" style="left:1097.9px"></div><div class="ddot" style="left:1178.1px"></div><div class="ddot" style="left:1293.9px"></div><div class="ddot" style="left:1374.5px"></div>
</body></html>
